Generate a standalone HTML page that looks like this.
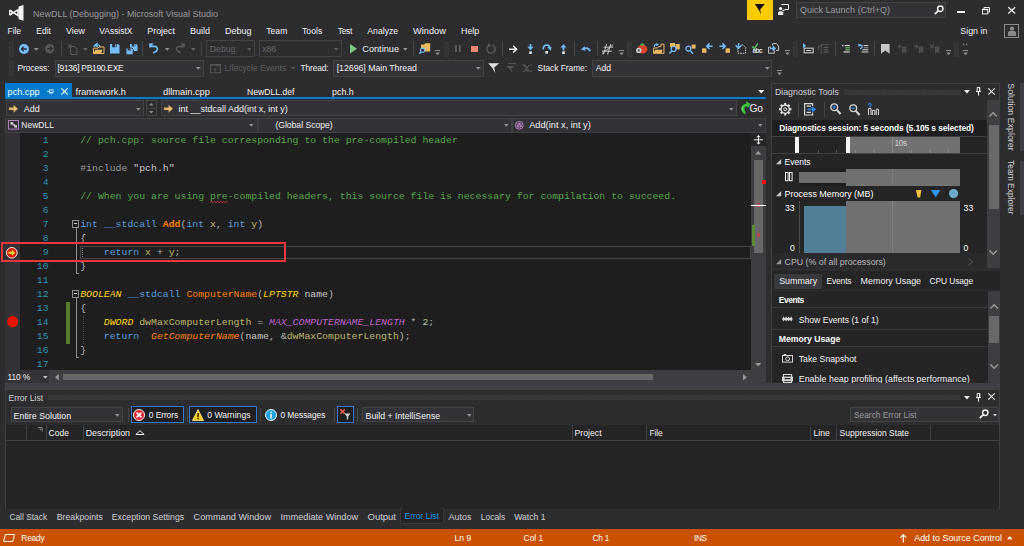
<!DOCTYPE html>
<html><head><meta charset="utf-8"><title>NewDLL (Debugging) - Microsoft Visual Studio</title>
<style>
html,body{margin:0;padding:0;}
body{width:1024px;height:546px;overflow:hidden;background:#2d2d30;position:relative;font-family:"Liberation Sans",sans-serif;}
.a{position:absolute;}
.t{position:absolute;white-space:pre;}
svg{position:absolute;overflow:visible;}
</style></head><body>
<svg style="left:9.3px;top:5px" width="15" height="16" viewBox="0 0 15 16"><path d="M9.6 1.4L14.5 0V15.7L9.6 14.3Z" fill="#f4f4f4"/><path d="M9.8 3.4V11.9L4.3 8.6L1.5 10.7L0 10V5.3L1.5 4.6L4.3 6.7ZM8.2 6.2L5.8 7.65L8.2 9.1ZM1.3 6.6V8.7L2.6 7.65Z" fill="#f4f4f4" fill-rule="evenodd"/></svg>
<span class="t" style="left:33px;top:5.6px;line-height:16px;font-size:8.97px;color:#999999;font-family:'Liberation Sans', sans-serif;letter-spacing:0.000px;">NewDLL (Debugging) - Microsoft Visual Studio</span>
<div class="a" style="left:746.5px;top:0px;width:26px;height:19.5px;background:#ffcc00;"></div>
<svg style="left:754.5px;top:4.4px" width="10" height="10.5" viewBox="0 0 10 10.5"><path d="M0 0H9.6L5.2 5.2L6 10.4L4 6.2L0 0Z" fill="#111"/><path d="M0 0H9.6L4.5 6Z" fill="#111"/></svg>
<svg style="left:778px;top:4px" width="11" height="11" viewBox="0 0 11 11"><path d="M3.2 0.5H10.5V5.5H7L5 7.2V5.5" fill="none" stroke="#e8e8e8" stroke-width="1"/><circle cx="2.6" cy="4.6" r="1.7" fill="#e8e8e8"/><path d="M0 11V8.6L1.2 7.2H4L5.2 8.6V11Z" fill="#e8e8e8"/></svg>
<div class="a" style="left:796px;top:1.5px;width:150px;height:16px;background:#333337;border:1px solid #434346;box-sizing:border-box;"></div>
<span class="t" style="left:800px;top:2.1999999999999993px;line-height:16px;font-size:9.02px;color:#999999;font-family:'Liberation Sans', sans-serif;letter-spacing:0.000px;">Quick Launch (Ctrl+Q)</span>
<svg style="left:933.5px;top:4.5px" width="10" height="10" viewBox="0 0 10 10"><circle cx="6.3" cy="3.7" r="2.7" fill="none" stroke="#f1f1f1" stroke-width="1.5"/><path d="M4.3 5.7L0.8 9.2" stroke="#f1f1f1" stroke-width="1.8"/></svg>
<div class="a" style="left:957px;top:11px;width:7.5px;height:2.2px;background:#f1f1f1;"></div>
<svg style="left:982px;top:7px" width="8" height="7.5" viewBox="0 0 8 7.5"><path d="M2 2V0.5H7.5V5H6" fill="none" stroke="#f1f1f1" stroke-width="1"/><rect x="0.5" y="2.3" width="5.3" height="4.6" fill="none" stroke="#f1f1f1" stroke-width="1"/><rect x="0" y="2" width="6.3" height="1.2" fill="#f1f1f1"/></svg>
<svg style="left:1007.5px;top:7.3px" width="7.5" height="6.8" viewBox="0 0 7.5 6.8"><path d="M0.3 0.3L7.2 6.5M7.2 0.3L0.3 6.5" stroke="#f1f1f1" stroke-width="1.3"/></svg>
<span class="t" style="left:7.6px;top:22.8px;line-height:16px;font-size:8.4px;color:#f1f1f1;font-family:'Liberation Sans', sans-serif;letter-spacing:-0.045px;">File</span>
<span class="t" style="left:36.3px;top:22.8px;line-height:16px;font-size:8.53px;color:#f1f1f1;font-family:'Liberation Sans', sans-serif;letter-spacing:0.000px;">Edit</span>
<span class="t" style="left:66px;top:22.8px;line-height:16px;font-size:8.84px;color:#f1f1f1;font-family:'Liberation Sans', sans-serif;letter-spacing:0.000px;">View</span>
<span class="t" style="left:99.3px;top:22.8px;line-height:16px;font-size:8.45px;color:#f1f1f1;font-family:'Liberation Sans', sans-serif;letter-spacing:0.000px;">VAssistX</span>
<span class="t" style="left:147.3px;top:22.8px;line-height:16px;font-size:8.9px;color:#f1f1f1;font-family:'Liberation Sans', sans-serif;letter-spacing:0.000px;">Project</span>
<span class="t" style="left:190px;top:22.8px;line-height:16px;font-size:8.99px;color:#f1f1f1;font-family:'Liberation Sans', sans-serif;letter-spacing:0.000px;">Build</span>
<span class="t" style="left:225px;top:22.8px;line-height:16px;font-size:8.99px;color:#f1f1f1;font-family:'Liberation Sans', sans-serif;letter-spacing:0.000px;">Debug</span>
<span class="t" style="left:266.3px;top:22.8px;line-height:16px;font-size:8.59px;color:#f1f1f1;font-family:'Liberation Sans', sans-serif;letter-spacing:0.000px;">Team</span>
<span class="t" style="left:302px;top:22.8px;line-height:16px;font-size:8.69px;color:#f1f1f1;font-family:'Liberation Sans', sans-serif;letter-spacing:-0.000px;">Tools</span>
<span class="t" style="left:337.8px;top:22.8px;line-height:16px;font-size:8.4px;color:#f1f1f1;font-family:'Liberation Sans', sans-serif;letter-spacing:-0.303px;">Test</span>
<span class="t" style="left:367.3px;top:22.8px;line-height:16px;font-size:8.68px;color:#f1f1f1;font-family:'Liberation Sans', sans-serif;letter-spacing:0.000px;">Analyze</span>
<span class="t" style="left:413px;top:22.8px;line-height:16px;font-size:9.28px;color:#f1f1f1;font-family:'Liberation Sans', sans-serif;letter-spacing:-0.000px;">Window</span>
<span class="t" style="left:461px;top:22.8px;line-height:16px;font-size:8.9px;color:#f1f1f1;font-family:'Liberation Sans', sans-serif;letter-spacing:0.000px;">Help</span>
<span class="t" style="left:960.3px;top:23.2px;line-height:16px;font-size:8.83px;color:#f1f1f1;font-family:'Liberation Sans', sans-serif;letter-spacing:0.000px;">Sign in</span>
<div class="a" style="left:1003.7px;top:24px;width:15.5px;height:14.3px;border:1px solid #8a8a8a;box-sizing:border-box;"></div>
<svg style="left:1006.5px;top:26.3px" width="10" height="10" viewBox="0 0 10 10"><circle cx="5" cy="2.6" r="2.2" fill="#8a8a8a"/><path d="M1 10V6L2.5 5H7.5L9 6V10Z" fill="#8a8a8a"/></svg>
<svg style="left:9px;top:42px" width="5" height="14" viewBox="0 0 5 14"><rect x="0" y="0" width="1" height="1" fill="#48484d"/><rect x="2.5" y="0" width="1" height="1" fill="#48484d"/><rect x="1.25" y="1.25" width="1" height="1" fill="#48484d"/><rect x="3.75" y="1.25" width="1" height="1" fill="#48484d"/><rect x="0" y="2.5" width="1" height="1" fill="#48484d"/><rect x="2.5" y="2.5" width="1" height="1" fill="#48484d"/><rect x="1.25" y="3.75" width="1" height="1" fill="#48484d"/><rect x="3.75" y="3.75" width="1" height="1" fill="#48484d"/><rect x="0" y="5.0" width="1" height="1" fill="#48484d"/><rect x="2.5" y="5.0" width="1" height="1" fill="#48484d"/><rect x="1.25" y="6.25" width="1" height="1" fill="#48484d"/><rect x="3.75" y="6.25" width="1" height="1" fill="#48484d"/><rect x="0" y="7.5" width="1" height="1" fill="#48484d"/><rect x="2.5" y="7.5" width="1" height="1" fill="#48484d"/><rect x="1.25" y="8.75" width="1" height="1" fill="#48484d"/><rect x="3.75" y="8.75" width="1" height="1" fill="#48484d"/><rect x="0" y="10.0" width="1" height="1" fill="#48484d"/><rect x="2.5" y="10.0" width="1" height="1" fill="#48484d"/><rect x="1.25" y="11.25" width="1" height="1" fill="#48484d"/><rect x="3.75" y="11.25" width="1" height="1" fill="#48484d"/><rect x="0" y="12.5" width="1" height="1" fill="#48484d"/><rect x="2.5" y="12.5" width="1" height="1" fill="#48484d"/><rect x="1.25" y="13.75" width="1" height="1" fill="#48484d"/><rect x="3.75" y="13.75" width="1" height="1" fill="#48484d"/></svg>
<svg style="left:19px;top:43.7px" width="10" height="10" viewBox="0 0 10 10"><circle cx="5" cy="5" r="5" fill="#75beff"/><path d="M7.8 5H2.6M4.8 2.6L2.4 5L4.8 7.4" stroke="#2d2d30" stroke-width="1.3" fill="none"/></svg>
<svg style="left:34.300000000000004px;top:47.800000000000004px" width="4.6" height="2.8" viewBox="0 0 4.6 2.8"><path d="M0 0H4.6L2.3 2.8Z" fill="#929292"/></svg>
<svg style="left:44.8px;top:44.3px" width="9.4" height="9.4" viewBox="0 0 9.4 9.4"><circle cx="4.7" cy="4.7" r="4.7" fill="#58585c"/><path d="M2 4.7H7M5 2.5L7.2 4.7L5 6.9" stroke="#2d2d30" stroke-width="1.2" fill="none"/></svg>
<div class="a" style="left:61.0px;top:41px;width:1px;height:15px;background:#46464a;"></div>
<svg style="left:68px;top:43.5px" width="10" height="11" viewBox="0 0 10 11"><path d="M2.5 2.5H6.5L9 5V10.5H2.5Z" fill="none" stroke="#5a5a5e" stroke-width="1"/><path d="M0.5 0.5L3.5 3.5M3.5 0.5L0.5 3.5M2 0V4M0 2H4" stroke="#5a5a5e" stroke-width="0.8"/></svg>
<svg style="left:83.10000000000001px;top:47.800000000000004px" width="4.6" height="2.8" viewBox="0 0 4.6 2.8"><path d="M0 0H4.6L2.3 2.8Z" fill="#6a6a6e"/></svg>
<svg style="left:93px;top:43.2px" width="11.5" height="11" viewBox="0 0 11.5 11"><path d="M1.2 4.2V2.8L3.6 0.8L3.4 2H5.2Q7 2 7 4" fill="none" stroke="#75beff" stroke-width="1.2"/><path d="M4.5 0L1 2.7L4.7 4.6Z" fill="#75beff"/><path d="M0.5 10.5V5.2H5L6 4H11V10.5Z" fill="none" stroke="#e8b962" stroke-width="1"/><path d="M0.5 10.5L2.3 6.8H9.5L8 10.5Z" fill="#e8b962"/></svg>
<svg style="left:110px;top:44px" width="9.5" height="9.5" viewBox="0 0 9.5 9.5"><path d="M0 0H8L9.5 1.5V9.5H0Z" fill="#75beff"/><rect x="2.2" y="0" width="4.6" height="3.2" fill="#2d2d30"/><rect x="5" y="0.4" width="1.3" height="2.2" fill="#75beff"/></svg>
<svg style="left:125.6px;top:43.5px" width="11.5" height="10.8" viewBox="0 0 11.5 10.8"><path d="M4 0H10.2L11.5 1.3V7H4Z" fill="#75beff"/><rect x="5.8" y="0" width="3.6" height="2.4" fill="#2d2d30"/><rect x="7.9" y="0.3" width="1" height="1.7" fill="#75beff"/><path d="M0 4H6L7.2 5.2V10.8H0Z" fill="#75beff" stroke="#2d2d30" stroke-width="0.9"/><rect x="1.7" y="4.3" width="3.4" height="2.2" fill="#2d2d30"/><rect x="3.7" y="4.5" width="0.9" height="1.6" fill="#75beff"/></svg>
<div class="a" style="left:142.0px;top:41px;width:1px;height:15px;background:#46464a;"></div>
<svg style="left:148.5px;top:43.3px" width="10" height="10.5" viewBox="0 0 10 10.5"><path d="M1.6 3.4H5.6Q8.6 3.6 8.4 6.2Q8 8.4 4.2 10" fill="none" stroke="#75beff" stroke-width="1.6"/><path d="M0 0.6L4.6 0.2L0.6 5.4Z" fill="#75beff"/></svg>
<svg style="left:164.89999999999998px;top:47.800000000000004px" width="4.6" height="2.8" viewBox="0 0 4.6 2.8"><path d="M0 0H4.6L2.3 2.8Z" fill="#929292"/></svg>
<svg style="left:175.4px;top:43.3px" width="10" height="10.5" viewBox="0 0 10 10.5"><path d="M8.4 3.4H4.4Q1.4 3.6 1.6 6.2Q2 8.4 5.8 10" fill="none" stroke="#58585c" stroke-width="1.5"/><path d="M10 0.6L5.4 0.2L9.4 5.4Z" fill="#58585c"/></svg>
<svg style="left:190.7px;top:47.800000000000004px" width="4.6" height="2.8" viewBox="0 0 4.6 2.8"><path d="M0 0H4.6L2.3 2.8Z" fill="#6a6a6e"/></svg>
<div class="a" style="left:201.0px;top:41px;width:1px;height:15px;background:#46464a;"></div>
<div class="a" style="left:206px;top:40.4px;width:49px;height:16.4px;border:1px solid #434346;box-sizing:border-box;"></div>
<span class="t" style="left:209.8px;top:41.0px;line-height:16px;font-size:8.69px;color:#656569;font-family:'Liberation Sans', sans-serif;letter-spacing:0.000px;">Debug</span>
<svg style="left:247.1px;top:47.800000000000004px" width="4.6" height="2.8" viewBox="0 0 4.6 2.8"><path d="M0 0H4.6L2.3 2.8Z" fill="#5a5a5e"/></svg>
<div class="a" style="left:259.3px;top:40.4px;width:82.4px;height:16.4px;border:1px solid #434346;box-sizing:border-box;"></div>
<span class="t" style="left:262.2px;top:41.0px;line-height:16px;font-size:8.68px;color:#656569;font-family:'Liberation Sans', sans-serif;letter-spacing:0.000px;">x86</span>
<svg style="left:334.2px;top:47.800000000000004px" width="4.6" height="2.8" viewBox="0 0 4.6 2.8"><path d="M0 0H4.6L2.3 2.8Z" fill="#5a5a5e"/></svg>
<svg style="left:349.6px;top:44px" width="7" height="9.4" viewBox="0 0 7 9.4"><path d="M0 0L7 4.7L0 9.4Z" fill="#7fc77f"/></svg>
<span class="t" style="left:362.3px;top:40.9px;line-height:16px;font-size:9.19px;color:#f1f1f1;font-family:'Liberation Sans', sans-serif;letter-spacing:0.000px;">Continue</span>
<svg style="left:403.3px;top:47.800000000000004px" width="4.6" height="2.8" viewBox="0 0 4.6 2.8"><path d="M0 0H4.6L2.3 2.8Z" fill="#929292"/></svg>
<div class="a" style="left:413.0px;top:41px;width:1px;height:15px;background:#46464a;"></div>
<svg style="left:418.7px;top:43px" width="11.5" height="11.2" viewBox="0 0 11.5 11.2"><path d="M2 7.5V1.4H5.2L6.2 0.3H11.2V8.4H4" fill="#e8b962"/><circle cx="3.6" cy="7.2" r="2.1" fill="#2d2d30" stroke="#75beff" stroke-width="1.1"/><path d="M2.2 8.8L0.3 10.9" stroke="#75beff" stroke-width="1.4"/></svg>
<svg style="left:435.1px;top:50.300000000000004px" width="5" height="5.6" viewBox="0 0 5 5.6"><rect x="0" y="0" width="5" height="1" fill="#8e8e8e"/><path d="M0.2 2.4H4.8L2.5 5.2Z" fill="#8e8e8e"/></svg>
<svg style="left:443.5px;top:42px" width="5" height="14" viewBox="0 0 5 14"><rect x="0" y="0" width="1" height="1" fill="#48484d"/><rect x="2.5" y="0" width="1" height="1" fill="#48484d"/><rect x="1.25" y="1.25" width="1" height="1" fill="#48484d"/><rect x="3.75" y="1.25" width="1" height="1" fill="#48484d"/><rect x="0" y="2.5" width="1" height="1" fill="#48484d"/><rect x="2.5" y="2.5" width="1" height="1" fill="#48484d"/><rect x="1.25" y="3.75" width="1" height="1" fill="#48484d"/><rect x="3.75" y="3.75" width="1" height="1" fill="#48484d"/><rect x="0" y="5.0" width="1" height="1" fill="#48484d"/><rect x="2.5" y="5.0" width="1" height="1" fill="#48484d"/><rect x="1.25" y="6.25" width="1" height="1" fill="#48484d"/><rect x="3.75" y="6.25" width="1" height="1" fill="#48484d"/><rect x="0" y="7.5" width="1" height="1" fill="#48484d"/><rect x="2.5" y="7.5" width="1" height="1" fill="#48484d"/><rect x="1.25" y="8.75" width="1" height="1" fill="#48484d"/><rect x="3.75" y="8.75" width="1" height="1" fill="#48484d"/><rect x="0" y="10.0" width="1" height="1" fill="#48484d"/><rect x="2.5" y="10.0" width="1" height="1" fill="#48484d"/><rect x="1.25" y="11.25" width="1" height="1" fill="#48484d"/><rect x="3.75" y="11.25" width="1" height="1" fill="#48484d"/><rect x="0" y="12.5" width="1" height="1" fill="#48484d"/><rect x="2.5" y="12.5" width="1" height="1" fill="#48484d"/><rect x="1.25" y="13.75" width="1" height="1" fill="#48484d"/><rect x="3.75" y="13.75" width="1" height="1" fill="#48484d"/></svg>
<div class="a" style="left:455px;top:45px;width:2.3px;height:7.2px;background:#5a5a5e;"></div>
<div class="a" style="left:459px;top:45px;width:2.3px;height:7.2px;background:#5a5a5e;"></div>
<div class="a" style="left:471px;top:45.7px;width:7px;height:6.6px;background:#f48771;"></div>
<svg style="left:486.3px;top:43.3px" width="10" height="11" viewBox="0 0 10 11"><path d="M3.2 2.4A4.1 4.1 0 1 0 6.4 2.2" fill="none" stroke="#5a5a5e" stroke-width="1.3"/><path d="M2 0L5.2 2.6L1.6 4.4Z" fill="#5a5a5e"/></svg>
<div class="a" style="left:502.0px;top:41px;width:1px;height:15px;background:#46464a;"></div>
<svg style="left:508.7px;top:44.7px" width="9" height="8.4" viewBox="0 0 9 8.4"><path d="M0 4.2H7M4.2 0.8L7.6 4.2L4.2 7.6" fill="none" stroke="#f1f1f1" stroke-width="1.5"/></svg>
<svg style="left:526.5px;top:43.8px" width="7" height="10" viewBox="0 0 7 10"><path d="M3.5 0V4" stroke="#75beff" stroke-width="1.8"/><path d="M0.4 2.8H6.6L3.5 6.2Z" fill="#75beff"/><rect x="2.2" y="7.4" width="2.6" height="2.6" fill="#e8e8e8"/></svg>
<svg style="left:541.8px;top:44.3px" width="9.6" height="9.6" viewBox="0 0 9.6 9.6"><path d="M1 5.4Q1.4 1 5 1Q7.6 1.2 7.8 4" fill="none" stroke="#75beff" stroke-width="1.7"/><path d="M5.4 3H9.6L8.6 6.8Z" fill="#75beff"/><rect x="3.4" y="7" width="2.6" height="2.6" fill="#e8e8e8"/></svg>
<svg style="left:559.5px;top:43.8px" width="7" height="10" viewBox="0 0 7 10"><path d="M3.5 2.4V6.4" stroke="#75beff" stroke-width="1.8"/><path d="M0.4 3.6H6.6L3.5 0.2Z" fill="#75beff"/><rect x="2.2" y="7.4" width="2.6" height="2.6" fill="#e8e8e8"/></svg>
<div class="a" style="left:574.1px;top:41px;width:1px;height:15px;background:#46464a;"></div>
<svg style="left:580.5px;top:45.8px" width="9.8" height="5.6" viewBox="0 0 9.8 5.6"><path d="M2.6 2.6Q7.6 1 9 5.2" fill="none" stroke="#75beff" stroke-width="1.7"/><path d="M0 3.4L3.6 0L4.4 4.8Z" fill="#75beff"/></svg>
<div class="a" style="left:597.0px;top:41px;width:1px;height:15px;background:#46464a;"></div>
<svg style="left:602px;top:43.7px" width="11.2" height="10.4" viewBox="0 0 11.2 10.4"><path d="M4.6 0L1.4 10.4M8.8 0L5.6 10.4M1.6 3.2H11.2M0 7.2H9.8" stroke="#c8c8c8" stroke-width="1"/><path d="M0 9.6L11.2 0.6" stroke="#c8c8c8" stroke-width="0.9"/></svg>
<svg style="left:618.7px;top:50.300000000000004px" width="5" height="5.6" viewBox="0 0 5 5.6"><rect x="0" y="0" width="5" height="1" fill="#8e8e8e"/><path d="M0.2 2.4H4.8L2.5 5.2Z" fill="#8e8e8e"/></svg>
<svg style="left:627px;top:42px" width="5" height="14" viewBox="0 0 5 14"><rect x="0" y="0" width="1" height="1" fill="#48484d"/><rect x="2.5" y="0" width="1" height="1" fill="#48484d"/><rect x="1.25" y="1.25" width="1" height="1" fill="#48484d"/><rect x="3.75" y="1.25" width="1" height="1" fill="#48484d"/><rect x="0" y="2.5" width="1" height="1" fill="#48484d"/><rect x="2.5" y="2.5" width="1" height="1" fill="#48484d"/><rect x="1.25" y="3.75" width="1" height="1" fill="#48484d"/><rect x="3.75" y="3.75" width="1" height="1" fill="#48484d"/><rect x="0" y="5.0" width="1" height="1" fill="#48484d"/><rect x="2.5" y="5.0" width="1" height="1" fill="#48484d"/><rect x="1.25" y="6.25" width="1" height="1" fill="#48484d"/><rect x="3.75" y="6.25" width="1" height="1" fill="#48484d"/><rect x="0" y="7.5" width="1" height="1" fill="#48484d"/><rect x="2.5" y="7.5" width="1" height="1" fill="#48484d"/><rect x="1.25" y="8.75" width="1" height="1" fill="#48484d"/><rect x="3.75" y="8.75" width="1" height="1" fill="#48484d"/><rect x="0" y="10.0" width="1" height="1" fill="#48484d"/><rect x="2.5" y="10.0" width="1" height="1" fill="#48484d"/><rect x="1.25" y="11.25" width="1" height="1" fill="#48484d"/><rect x="3.75" y="11.25" width="1" height="1" fill="#48484d"/><rect x="0" y="12.5" width="1" height="1" fill="#48484d"/><rect x="2.5" y="12.5" width="1" height="1" fill="#48484d"/><rect x="1.25" y="13.75" width="1" height="1" fill="#48484d"/><rect x="3.75" y="13.75" width="1" height="1" fill="#48484d"/></svg>
<svg style="left:636px;top:43.4px" width="11.6" height="10.8" viewBox="0 0 11.6 10.8"><ellipse cx="6.4" cy="6.2" rx="5" ry="4.4" fill="#e0442c"/><path d="M4 1.8L6.2 0L8.6 1.6L7 2.8L5 2.8Z" fill="#4fae4f"/><circle cx="2.8" cy="7.4" r="2.7" fill="#d0d0d0"/><circle cx="2.8" cy="7.4" r="1.1" fill="#444"/></svg>
<svg style="left:652.5px;top:43.4px" width="11.5" height="10.8" viewBox="0 0 11.5 10.8"><path d="M1.4 4V2.8Q1.6 1.2 4 1.4" fill="none" stroke="#75beff" stroke-width="1.2"/><path d="M3.4 0L6 1.6L3.4 3.2Z" fill="#75beff"/><path d="M0.6 10.3V5H4.6L5.6 3.6H8V1.2H11V10.3Z" fill="none" stroke="#e8b962" stroke-width="1"/><path d="M0.6 10.3L2 6.8H9.6L8.4 10.3Z" fill="#e8b962"/></svg>
<svg style="left:669px;top:43.4px" width="11" height="10.8" viewBox="0 0 11 10.8"><rect x="1" y="0" width="5" height="4.2" fill="#e8b962"/><rect x="6.4" y="1" width="4.4" height="5.4" fill="#e8b962"/><circle cx="4.6" cy="6" r="2.5" fill="#2d2d30" stroke="#75beff" stroke-width="1.2"/><path d="M3 7.8L0.4 10.5" stroke="#75beff" stroke-width="1.4"/></svg>
<svg style="left:685px;top:44px" width="11" height="10.4" viewBox="0 0 11 10.4"><rect x="6.6" y="0.6" width="4" height="4" fill="#e8b962"/><circle cx="3.4" cy="4.6" r="2.5" fill="none" stroke="#75beff" stroke-width="1.2"/><path d="M5.2 6.6L8 9.8" stroke="#75beff" stroke-width="1.4"/></svg>
<svg style="left:702.4px;top:43.4px" width="11" height="10" viewBox="0 0 11 10"><rect x="0" y="5.4" width="4.4" height="4.4" fill="#e8b962"/><path d="M5 3.2H10.6M7.6 0.4L4.8 3.2L7.6 6" fill="none" stroke="#75beff" stroke-width="1.5"/></svg>
<svg style="left:718.6px;top:43.4px" width="11" height="10" viewBox="0 0 11 10"><rect x="6.6" y="5.4" width="4.4" height="4.4" fill="#e8b962"/><path d="M0.4 3.2H6M3.4 0.4L6.2 3.2L3.4 6" fill="none" stroke="#75beff" stroke-width="1.5"/></svg>
<svg style="left:735px;top:43.4px" width="11.2" height="10.8" viewBox="0 0 11.2 10.8"><path d="M3 5V10.3H10.6V4.4L7.8 1.8H6.6" fill="none" stroke="#c8c8c8" stroke-width="1" stroke-dasharray="1.6 0.9"/><path d="M3.6 0V4.6M0.6 2.2L3.6 5.2L6.6 2.2" fill="none" stroke="#75beff" stroke-width="1.4"/></svg>
<svg style="left:752px;top:43.2px" width="10.8" height="11" viewBox="0 0 10.8 11"><path d="M0.4 3.4L2.4 5.6L5.8 0.4" fill="none" stroke="#5fc25f" stroke-width="1.5"/></svg>
<span class="t" style="left:752.6px;top:47.4px;line-height:8px;font-size:7px;color:#d8d8d8;font-family:'Liberation Sans', sans-serif;font-weight:bold;letter-spacing:-1.031px;">abc</span>
<svg style="left:768px;top:43.4px" width="11.2" height="10.8" viewBox="0 0 11.2 10.8"><path d="M4.6 2.6V0.6H8.2L10.6 2.8V7.4H8" fill="none" stroke="#c8c8c8" stroke-width="1"/><path d="M0.6 4.2H3M6.4 7.6V10.2H0.6V4.2" fill="none" stroke="#c8c8c8" stroke-width="1"/><path d="M2 5.4H6.6M4.8 3.2L7 5.4L4.8 7.6" fill="none" stroke="#75beff" stroke-width="1.5"/></svg>
<svg style="left:784.7px;top:50.300000000000004px" width="5" height="5.6" viewBox="0 0 5 5.6"><rect x="0" y="0" width="5" height="1" fill="#8e8e8e"/><path d="M0.2 2.4H4.8L2.5 5.2Z" fill="#8e8e8e"/></svg>
<svg style="left:793px;top:42px" width="5" height="14" viewBox="0 0 5 14"><rect x="0" y="0" width="1" height="1" fill="#48484d"/><rect x="2.5" y="0" width="1" height="1" fill="#48484d"/><rect x="1.25" y="1.25" width="1" height="1" fill="#48484d"/><rect x="3.75" y="1.25" width="1" height="1" fill="#48484d"/><rect x="0" y="2.5" width="1" height="1" fill="#48484d"/><rect x="2.5" y="2.5" width="1" height="1" fill="#48484d"/><rect x="1.25" y="3.75" width="1" height="1" fill="#48484d"/><rect x="3.75" y="3.75" width="1" height="1" fill="#48484d"/><rect x="0" y="5.0" width="1" height="1" fill="#48484d"/><rect x="2.5" y="5.0" width="1" height="1" fill="#48484d"/><rect x="1.25" y="6.25" width="1" height="1" fill="#48484d"/><rect x="3.75" y="6.25" width="1" height="1" fill="#48484d"/><rect x="0" y="7.5" width="1" height="1" fill="#48484d"/><rect x="2.5" y="7.5" width="1" height="1" fill="#48484d"/><rect x="1.25" y="8.75" width="1" height="1" fill="#48484d"/><rect x="3.75" y="8.75" width="1" height="1" fill="#48484d"/><rect x="0" y="10.0" width="1" height="1" fill="#48484d"/><rect x="2.5" y="10.0" width="1" height="1" fill="#48484d"/><rect x="1.25" y="11.25" width="1" height="1" fill="#48484d"/><rect x="3.75" y="11.25" width="1" height="1" fill="#48484d"/><rect x="0" y="12.5" width="1" height="1" fill="#48484d"/><rect x="2.5" y="12.5" width="1" height="1" fill="#48484d"/><rect x="1.25" y="13.75" width="1" height="1" fill="#48484d"/><rect x="3.75" y="13.75" width="1" height="1" fill="#48484d"/></svg>
<svg style="left:802.5px;top:43.4px" width="10.6" height="10.4" viewBox="0 0 10.6 10.4"><path d="M0 0L3.2 3L0 5Z" fill="#75beff"/><rect x="1.2" y="5.2" width="9" height="4.6" fill="none" stroke="#c8c8c8" stroke-width="1.1"/><rect x="3.2" y="7" width="5" height="1.1" fill="#c8c8c8"/></svg>
<svg style="left:818px;top:43.6px" width="11.4" height="10.4" viewBox="0 0 11.4 10.4"><path d="M0.6 6.4V2H3.2M3.2 10V0.6H10.8" fill="none" stroke="#56565a" stroke-width="1"/><path d="M5.6 3.4H10.4M5.6 5.8H10.4M5.6 8.2H10.4" stroke="#56565a" stroke-width="1.4"/></svg>
<div class="a" style="left:835.1px;top:41px;width:1px;height:15px;background:#46464a;"></div>
<svg style="left:842.4px;top:44.6px" width="8" height="7.6" viewBox="0 0 8 7.6"><rect x="0" y="0.2" width="1.6" height="1" fill="#e8e8e8"/><rect x="2.6" y="0" width="5.2" height="1.1" fill="#e8e8e8"/><rect x="3.4" y="2.2" width="4.4" height="1.1" fill="#6ccb6c"/><rect x="3.4" y="4.3" width="4.4" height="1.1" fill="#6ccb6c"/><rect x="1.6" y="6.4" width="6.2" height="1.1" fill="#e8e8e8"/></svg>
<svg style="left:857.6px;top:44px" width="10.6" height="8.6" viewBox="0 0 10.6 8.6"><path d="M1.4 1.8Q3.4 0.2 4.2 2.2Q4.4 3.8 2.2 5" fill="none" stroke="#75beff" stroke-width="1.3"/><path d="M0 0L2.8 0.4L0.6 3Z" fill="#75beff"/><rect x="5.6" y="1" width="4.8" height="1.1" fill="#c8c8c8"/><rect x="5.6" y="3.2" width="4.8" height="1.1" fill="#8a8a8a"/><rect x="4.4" y="5.2" width="6" height="1.1" fill="#c8c8c8"/><rect x="3.6" y="7.4" width="6.8" height="1.1" fill="#c8c8c8"/></svg>
<div class="a" style="left:874.1px;top:41px;width:1px;height:15px;background:#46464a;"></div>
<svg style="left:880.6px;top:43.5px" width="8.6" height="9.8" viewBox="0 0 8.6 9.8"><path d="M0 0H8.6V9.8L4.3 6.6L0 9.8Z" fill="#c8c8c8"/></svg>
<svg style="left:898px;top:43.8px" width="8.6" height="9.6" viewBox="0 0 8.6 9.6"><path d="M4 2.4V9.6L6.2 7.8L8.4 9.6V2.4Z" fill="#4e4e52"/><path d="M0.2 2.4H4.2M2.2 0.4L0.2 2.4L2.2 4.4" fill="none" stroke="#4e4e52" stroke-width="1.1"/></svg>
<svg style="left:914px;top:43.8px" width="9.4" height="9.6" viewBox="0 0 9.4 9.6"><path d="M4.8 2.4V9.6L7 7.8L9.2 9.6V2.4Z" fill="#4e4e52"/><path d="M0 2.4H4M2 0.4L4 2.4L2 4.4" fill="none" stroke="#4e4e52" stroke-width="1.1"/></svg>
<svg style="left:930px;top:43.8px" width="9.6" height="9.6" viewBox="0 0 9.6 9.6"><path d="M5 2.4V9.6L7.2 7.8L9.4 9.6V2.4Z" fill="#4e4e52"/><path d="M0.2 0.4L4 4.2M4 0.4L0.2 4.2" fill="none" stroke="#4e4e52" stroke-width="1.1"/></svg>
<svg style="left:945.5px;top:50.300000000000004px" width="5" height="5.6" viewBox="0 0 5 5.6"><rect x="0" y="0" width="5" height="1" fill="#8e8e8e"/><path d="M0.2 2.4H4.8L2.5 5.2Z" fill="#8e8e8e"/></svg>
<svg style="left:953.5px;top:42px" width="5" height="14" viewBox="0 0 5 14"><rect x="0" y="0" width="1" height="1" fill="#48484d"/><rect x="2.5" y="0" width="1" height="1" fill="#48484d"/><rect x="1.25" y="1.25" width="1" height="1" fill="#48484d"/><rect x="3.75" y="1.25" width="1" height="1" fill="#48484d"/><rect x="0" y="2.5" width="1" height="1" fill="#48484d"/><rect x="2.5" y="2.5" width="1" height="1" fill="#48484d"/><rect x="1.25" y="3.75" width="1" height="1" fill="#48484d"/><rect x="3.75" y="3.75" width="1" height="1" fill="#48484d"/><rect x="0" y="5.0" width="1" height="1" fill="#48484d"/><rect x="2.5" y="5.0" width="1" height="1" fill="#48484d"/><rect x="1.25" y="6.25" width="1" height="1" fill="#48484d"/><rect x="3.75" y="6.25" width="1" height="1" fill="#48484d"/><rect x="0" y="7.5" width="1" height="1" fill="#48484d"/><rect x="2.5" y="7.5" width="1" height="1" fill="#48484d"/><rect x="1.25" y="8.75" width="1" height="1" fill="#48484d"/><rect x="3.75" y="8.75" width="1" height="1" fill="#48484d"/><rect x="0" y="10.0" width="1" height="1" fill="#48484d"/><rect x="2.5" y="10.0" width="1" height="1" fill="#48484d"/><rect x="1.25" y="11.25" width="1" height="1" fill="#48484d"/><rect x="3.75" y="11.25" width="1" height="1" fill="#48484d"/><rect x="0" y="12.5" width="1" height="1" fill="#48484d"/><rect x="2.5" y="12.5" width="1" height="1" fill="#48484d"/><rect x="1.25" y="13.75" width="1" height="1" fill="#48484d"/><rect x="3.75" y="13.75" width="1" height="1" fill="#48484d"/></svg>
<svg style="left:962.6px;top:42.6px" width="6" height="3" viewBox="0 0 6 3"><path d="M0 0L1.6 1.4L0 2.8ZM3 0L4.6 1.4L3 2.8Z" fill="#8a8a8a"/></svg>
<svg style="left:962.9px;top:50.300000000000004px" width="5" height="5.6" viewBox="0 0 5 5.6"><rect x="0" y="0" width="5" height="1" fill="#8e8e8e"/><path d="M0.2 2.4H4.8L2.5 5.2Z" fill="#8e8e8e"/></svg>
<svg style="left:9px;top:61px" width="5" height="15" viewBox="0 0 5 15"><rect x="0" y="0" width="1" height="1" fill="#48484d"/><rect x="2.5" y="0" width="1" height="1" fill="#48484d"/><rect x="1.25" y="1.25" width="1" height="1" fill="#48484d"/><rect x="3.75" y="1.25" width="1" height="1" fill="#48484d"/><rect x="0" y="2.5" width="1" height="1" fill="#48484d"/><rect x="2.5" y="2.5" width="1" height="1" fill="#48484d"/><rect x="1.25" y="3.75" width="1" height="1" fill="#48484d"/><rect x="3.75" y="3.75" width="1" height="1" fill="#48484d"/><rect x="0" y="5.0" width="1" height="1" fill="#48484d"/><rect x="2.5" y="5.0" width="1" height="1" fill="#48484d"/><rect x="1.25" y="6.25" width="1" height="1" fill="#48484d"/><rect x="3.75" y="6.25" width="1" height="1" fill="#48484d"/><rect x="0" y="7.5" width="1" height="1" fill="#48484d"/><rect x="2.5" y="7.5" width="1" height="1" fill="#48484d"/><rect x="1.25" y="8.75" width="1" height="1" fill="#48484d"/><rect x="3.75" y="8.75" width="1" height="1" fill="#48484d"/><rect x="0" y="10.0" width="1" height="1" fill="#48484d"/><rect x="2.5" y="10.0" width="1" height="1" fill="#48484d"/><rect x="1.25" y="11.25" width="1" height="1" fill="#48484d"/><rect x="3.75" y="11.25" width="1" height="1" fill="#48484d"/><rect x="0" y="12.5" width="1" height="1" fill="#48484d"/><rect x="2.5" y="12.5" width="1" height="1" fill="#48484d"/><rect x="1.25" y="13.75" width="1" height="1" fill="#48484d"/><rect x="3.75" y="13.75" width="1" height="1" fill="#48484d"/></svg>
<span class="t" style="left:17.6px;top:60.3px;line-height:16px;font-size:8.4px;color:#f1f1f1;font-family:'Liberation Sans', sans-serif;letter-spacing:-0.098px;">Process:</span>
<div class="a" style="left:54.5px;top:60.4px;width:149.3px;height:16.4px;background:#333337;border:1px solid #434346;box-sizing:border-box;"></div>
<span class="t" style="left:57.4px;top:60.3px;line-height:16px;font-size:8.4px;color:#f1f1f1;font-family:'Liberation Sans', sans-serif;letter-spacing:-0.244px;">[9136] PB190.EXE</span>
<svg style="left:196.2px;top:67.19999999999999px" width="4.6" height="2.8" viewBox="0 0 4.6 2.8"><path d="M0 0H4.6L2.3 2.8Z" fill="#929292"/></svg>
<svg style="left:210px;top:64px" width="10.8" height="9.2" viewBox="0 0 10.8 9.2"><rect x="0.5" y="0.5" width="9.8" height="8.2" fill="none" stroke="#56565a" stroke-width="1"/><rect x="0" y="0" width="10.8" height="1.8" fill="#56565a"/><path d="M6.4 3.4L4.4 5.4H6.4L4.8 7.4" fill="none" stroke="#56565a" stroke-width="0.9"/></svg>
<span class="t" style="left:224.6px;top:60.3px;line-height:16px;font-size:8.52px;color:#5e5e62;font-family:'Liberation Sans', sans-serif;letter-spacing:0.000px;">Lifecycle Events</span>
<svg style="left:290.7px;top:67.19999999999999px" width="4.6" height="2.8" viewBox="0 0 4.6 2.8"><path d="M0 0H4.6L2.3 2.8Z" fill="#5a5a5e"/></svg>
<span class="t" style="left:300.6px;top:60.3px;line-height:16px;font-size:8.4px;color:#f1f1f1;font-family:'Liberation Sans', sans-serif;letter-spacing:-0.159px;">Thread:</span>
<div class="a" style="left:333px;top:60.4px;width:150.8px;height:16.4px;background:#333337;border:1px solid #434346;box-sizing:border-box;"></div>
<span class="t" style="left:336.7px;top:60.3px;line-height:16px;font-size:8.71px;color:#f1f1f1;font-family:'Liberation Sans', sans-serif;letter-spacing:0.000px;">[12696] Main Thread</span>
<svg style="left:475.7px;top:67.19999999999999px" width="4.6" height="2.8" viewBox="0 0 4.6 2.8"><path d="M0 0H4.6L2.3 2.8Z" fill="#929292"/></svg>
<svg style="left:488px;top:63px" width="11.5" height="10.6" viewBox="0 0 11.5 10.6"><path d="M0.2 0.2H11.2L6.2 4.6L7.4 10.4L4.6 5.2Z" fill="#e0e0e0"/></svg>
<svg style="left:505.6px;top:63px" width="10.4" height="10.4" viewBox="0 0 10.4 10.4"><path d="M2.4 0.6H10.2" stroke="#56565a" stroke-width="1.1"/><path d="M0.2 3H8.6L5.2 5.8L6 10L3.8 6.2Z" fill="#56565a"/></svg>
<svg style="left:522px;top:64px" width="10.4" height="8.4" viewBox="0 0 10.4 8.4"><path d="M0.4 1.2L3.2 1.2Q5 4.4 7 7.2L10 7.2M0.4 7.2H3.2Q5 4 7 1.2L10 1.2" fill="none" stroke="#56565a" stroke-width="1.1"/><path d="M1 0L6 8.4" stroke="#56565a" stroke-width="0.9"/></svg>
<span class="t" style="left:537.6px;top:60.3px;line-height:16px;font-size:8.4px;color:#f1f1f1;font-family:'Liberation Sans', sans-serif;letter-spacing:-0.032px;">Stack Frame:</span>
<div class="a" style="left:592px;top:60.4px;width:180px;height:16.4px;background:#333337;border:1px solid #434346;box-sizing:border-box;"></div>
<span class="t" style="left:595.7px;top:60.3px;line-height:16px;font-size:8.65px;color:#f1f1f1;font-family:'Liberation Sans', sans-serif;letter-spacing:0.000px;">Add</span>
<svg style="left:764.7px;top:67.19999999999999px" width="4.6" height="2.8" viewBox="0 0 4.6 2.8"><path d="M0 0H4.6L2.3 2.8Z" fill="#929292"/></svg>
<svg style="left:777.2px;top:70.1px" width="5" height="5.6" viewBox="0 0 5 5.6"><rect x="0" y="0" width="5" height="1" fill="#8e8e8e"/><path d="M0.2 2.4H4.8L2.5 5.2Z" fill="#8e8e8e"/></svg>
<div class="a" style="left:4.5px;top:83px;width:67.6px;height:14.5px;background:#007acc;"></div>
<div class="a" style="left:4.5px;top:97.2px;width:761.5px;height:1.9px;background:#007acc;"></div>
<span class="t" style="left:7.6px;top:84.0px;line-height:16px;font-size:9.14px;color:#ffffff;font-family:'Liberation Sans', sans-serif;letter-spacing:0.000px;">pch.cpp</span>
<svg style="left:47.4px;top:88.6px" width="6.6" height="5" viewBox="0 0 6.6 5"><path d="M0 2.4H2.4M2.6 0.4V4.6M2.6 0.8H6.2V3.4H2.6M2.6 4H6.2" fill="none" stroke="#d6ebf7" stroke-width="0.9"/></svg>
<svg style="left:61px;top:87.8px" width="7" height="7" viewBox="0 0 7 7"><path d="M0.3 0.3L6.7 6.7M6.7 0.3L0.3 6.7" stroke="#ffffff" stroke-width="1.2"/></svg>
<span class="t" style="left:75.6px;top:84.0px;line-height:16px;font-size:9.16px;color:#f1f1f1;font-family:'Liberation Sans', sans-serif;letter-spacing:0.000px;">framework.h</span>
<span class="t" style="left:163px;top:84.0px;line-height:16px;font-size:9.29px;color:#f1f1f1;font-family:'Liberation Sans', sans-serif;letter-spacing:0.000px;">dllmain.cpp</span>
<span class="t" style="left:247px;top:84.0px;line-height:16px;font-size:8.63px;color:#f1f1f1;font-family:'Liberation Sans', sans-serif;letter-spacing:0.000px;">NewDLL.def</span>
<span class="t" style="left:332px;top:84.0px;line-height:16px;font-size:8.91px;color:#f1f1f1;font-family:'Liberation Sans', sans-serif;letter-spacing:0.000px;">pch.h</span>
<svg style="left:758px;top:89.6px" width="6.4" height="3.6" viewBox="0 0 6.4 3.6"><path d="M0 0H6.4L3.2 3.6Z" fill="#f1f1f1"/></svg>
<div class="a" style="left:4.5px;top:99.1px;width:761.5px;height:18.4px;background:#2d2d30;"></div>
<div class="a" style="left:5.5px;top:100.4px;width:138.3px;height:15.4px;background:#333337;border:1px solid #434346;box-sizing:border-box;"></div>
<svg style="left:8.6px;top:104.7px" width="9" height="7.6" viewBox="0 0 9 7.6"><path d="M0 2.6H4.6V0L9 3.8L4.6 7.6V5H0Z" fill="#e8c17a" stroke="#8a6a2a" stroke-width="0.4"/></svg>
<span class="t" style="left:23.8px;top:100.6px;line-height:16px;font-size:8.99px;color:#f1f1f1;font-family:'Liberation Sans', sans-serif;letter-spacing:0.000px;">Add</span>
<svg style="left:136.0px;top:107.6px" width="4.6" height="2.8" viewBox="0 0 4.6 2.8"><path d="M0 0H4.6L2.3 2.8Z" fill="#929292"/></svg>
<div class="a" style="left:145.7px;top:100.4px;width:11.8px;height:15.4px;background:#2d2d30;border:1px solid #434346;box-sizing:border-box;"></div>
<div class="a" style="left:145.7px;top:107.6px;width:11.8px;height:1px;background:#434346;"></div>
<svg style="left:149px;top:102.6px" width="4.6" height="2.6" viewBox="0 0 4.6 2.6"><path d="M0 2.6L2.3 0L4.6 2.6Z" fill="#8a8a8a"/></svg>
<svg style="left:149px;top:110.8px" width="4.6" height="2.6" viewBox="0 0 4.6 2.6"><path d="M0 0L2.3 2.6L4.6 0Z" fill="#8a8a8a"/></svg>
<div class="a" style="left:161px;top:100.4px;width:576.4px;height:15.4px;background:#333337;border:1px solid #434346;box-sizing:border-box;"></div>
<svg style="left:163.8px;top:104.7px" width="9" height="7.6" viewBox="0 0 9 7.6"><path d="M0 2.6H4.6V0L9 3.8L4.6 7.6V5H0Z" fill="#e8c17a" stroke="#8a6a2a" stroke-width="0.4"/></svg>
<span class="t" style="left:178.6px;top:100.6px;line-height:16px;font-size:8.97px;color:#f1f1f1;font-family:'Liberation Sans', sans-serif;letter-spacing:0.000px;">int __stdcall Add(int x, int y)</span>
<svg style="left:728.9000000000001px;top:107.6px" width="4.6" height="2.8" viewBox="0 0 4.6 2.8"><path d="M0 0H4.6L2.3 2.8Z" fill="#929292"/></svg>
<svg style="left:739.6px;top:101px" width="10.6" height="14" viewBox="0 0 10.6 14"><path d="M4.6 13.6Q-0.6 8 2.4 4.4Q4 2.8 6.4 2.7L6 0.2L10.6 3L7.5 7.2L7 4.9Q4.8 5.2 4.3 7.3Q4 9.4 5.7 11.3Z" fill="#3cc63c"/><path d="M2.6 5.4Q1.4 7.6 2.6 10" fill="none" stroke="#7ee07e" stroke-width="0.9"/></svg>
<span class="t" style="left:749.4px;top:100.6px;line-height:16px;font-size:10.19px;color:#f1f1f1;font-family:'Liberation Sans', sans-serif;letter-spacing:0.000px;">Go</span>
<div class="a" style="left:4.5px;top:117.8px;width:761.5px;height:15.6px;background:#2d2d30;"></div>
<div class="a" style="left:4.5px;top:117.8px;width:253.3px;height:15.4px;background:#333337;border:1px solid #3f3f46;box-sizing:border-box;"></div>
<div class="a" style="left:257.8px;top:117.8px;width:254px;height:15.4px;background:#333337;border:1px solid #3f3f46;box-sizing:border-box;"></div>
<div class="a" style="left:511.8px;top:117.8px;width:254.2px;height:15.4px;background:#333337;border:1px solid #3f3f46;box-sizing:border-box;"></div>
<svg style="left:8.2px;top:120.2px" width="11" height="9.6" viewBox="0 0 11 9.6"><rect x="0.5" y="0.5" width="10" height="8.6" fill="none" stroke="#b57fc0" stroke-width="1"/><path d="M2.4 2.2H5.2V4.2H7V5.2H9V7.4H6.2V5.4H4.4V4.4H2.4Z" fill="#d8d8d8"/></svg>
<span class="t" style="left:21.3px;top:116.9px;line-height:16px;font-size:8.5px;color:#f1f1f1;font-family:'Liberation Sans', sans-serif;letter-spacing:-0.000px;">NewDLL</span>
<svg style="left:249.1px;top:124.0px" width="4.6" height="2.8" viewBox="0 0 4.6 2.8"><path d="M0 0H4.6L2.3 2.8Z" fill="#929292"/></svg>
<span class="t" style="left:275.4px;top:116.9px;line-height:16px;font-size:8.59px;color:#f1f1f1;font-family:'Liberation Sans', sans-serif;letter-spacing:0.000px;">(Global Scope)</span>
<svg style="left:503.9px;top:124.0px" width="4.6" height="2.8" viewBox="0 0 4.6 2.8"><path d="M0 0H4.6L2.3 2.8Z" fill="#929292"/></svg>
<svg style="left:514.6px;top:120.6px" width="8.6" height="8.6" viewBox="0 0 8.6 8.6"><circle cx="4.3" cy="4.3" r="3.9" fill="none" stroke="#b57fc0" stroke-width="1"/><path d="M4.3 1.6L6.8 3V5.8L4.3 7.2L1.8 5.8V3Z" fill="#b57fc0"/><path d="M4.3 4.4V7M4.3 4.4L2 3.1M4.3 4.4L6.6 3.1" stroke="#2d2d30" stroke-width="0.6"/></svg>
<span class="t" style="left:529.2px;top:116.9px;line-height:16px;font-size:9.24px;color:#f1f1f1;font-family:'Liberation Sans', sans-serif;letter-spacing:0.000px;">Add(int x, int y)</span>
<svg style="left:758.3000000000001px;top:124.0px" width="4.6" height="2.8" viewBox="0 0 4.6 2.8"><path d="M0 0H4.6L2.3 2.8Z" fill="#929292"/></svg>
<div class="a" style="left:4.5px;top:133.4px;width:15px;height:236.6px;background:#333337;"></div>
<div class="a" style="left:19.5px;top:133.4px;width:731.5px;height:236.6px;background:#1e1e1e;"></div>
<span class="t" style="left:42.7px;top:134.1px;line-height:14px;font-size:9.8px;color:#2b91af;font-family:'Liberation Mono', monospace;letter-spacing:0.009px;">1</span>
<span class="t" style="left:42.7px;top:148.1px;line-height:14px;font-size:9.8px;color:#2b91af;font-family:'Liberation Mono', monospace;letter-spacing:0.009px;">2</span>
<span class="t" style="left:42.7px;top:162.1px;line-height:14px;font-size:9.8px;color:#2b91af;font-family:'Liberation Mono', monospace;letter-spacing:0.009px;">3</span>
<span class="t" style="left:42.7px;top:176.1px;line-height:14px;font-size:9.8px;color:#2b91af;font-family:'Liberation Mono', monospace;letter-spacing:0.009px;">4</span>
<span class="t" style="left:42.7px;top:190.1px;line-height:14px;font-size:9.8px;color:#2b91af;font-family:'Liberation Mono', monospace;letter-spacing:0.009px;">5</span>
<span class="t" style="left:42.7px;top:204.1px;line-height:14px;font-size:9.8px;color:#2b91af;font-family:'Liberation Mono', monospace;letter-spacing:0.009px;">6</span>
<span class="t" style="left:42.7px;top:218.1px;line-height:14px;font-size:9.8px;color:#2b91af;font-family:'Liberation Mono', monospace;letter-spacing:0.009px;">7</span>
<span class="t" style="left:42.7px;top:232.1px;line-height:14px;font-size:9.8px;color:#2b91af;font-family:'Liberation Mono', monospace;letter-spacing:0.009px;">8</span>
<span class="t" style="left:42.7px;top:246.1px;line-height:14px;font-size:9.8px;color:#2b91af;font-family:'Liberation Mono', monospace;letter-spacing:0.009px;">9</span>
<span class="t" style="left:36.8px;top:260.1px;line-height:14px;font-size:9.8px;color:#2b91af;font-family:'Liberation Mono', monospace;letter-spacing:0.034px;">10</span>
<span class="t" style="left:36.8px;top:274.1px;line-height:14px;font-size:9.8px;color:#2b91af;font-family:'Liberation Mono', monospace;letter-spacing:0.034px;">11</span>
<span class="t" style="left:36.8px;top:288.1px;line-height:14px;font-size:9.8px;color:#2b91af;font-family:'Liberation Mono', monospace;letter-spacing:0.034px;">12</span>
<span class="t" style="left:36.8px;top:302.1px;line-height:14px;font-size:9.8px;color:#2b91af;font-family:'Liberation Mono', monospace;letter-spacing:0.034px;">13</span>
<span class="t" style="left:36.8px;top:316.1px;line-height:14px;font-size:9.8px;color:#2b91af;font-family:'Liberation Mono', monospace;letter-spacing:0.034px;">14</span>
<span class="t" style="left:36.8px;top:330.1px;line-height:14px;font-size:9.8px;color:#2b91af;font-family:'Liberation Mono', monospace;letter-spacing:0.034px;">15</span>
<span class="t" style="left:36.8px;top:344.1px;line-height:14px;font-size:9.8px;color:#2b91af;font-family:'Liberation Mono', monospace;letter-spacing:0.034px;">16</span>
<span class="t" style="left:36.8px;top:358.1px;line-height:14px;font-size:9.8px;color:#2b91af;font-family:'Liberation Mono', monospace;letter-spacing:0.034px;">17</span>
<span class="t" style="left:80.2px;top:134.1px;line-height:14px;font-size:9.83px;color:#57a64a;font-family:'Liberation Mono', monospace;letter-spacing:0.002px;">// pch.cpp: source file corresponding to the pre-compiled header</span>
<span class="t" style="left:80.2px;top:162.1px;line-height:14px;font-size:9.83px;color:#9b9b9b;font-family:'Liberation Mono', monospace;letter-spacing:0.002px;">#include</span>
<span class="t" style="left:133.3px;top:162.1px;line-height:14px;font-size:9.83px;color:#c8c8c8;font-family:'Liberation Mono', monospace;letter-spacing:0.001px;">&quot;pch.h&quot;</span>
<span class="t" style="left:80.2px;top:190.1px;line-height:14px;font-size:9.83px;color:#57a64a;font-family:'Liberation Mono', monospace;letter-spacing:0.002px;">// When you are using pre-compiled headers, this source file is necessary for compilation to succeed.</span>
<svg style="left:210.0px;top:201.29999999999998px" width="17.700000000000003" height="2.2" viewBox="0 0 17.700000000000003 2.2"><path d="M0 1.6L1.5 0.4L3 1.6L4.5 0.4L6 1.6L7.5 0.4L9 1.6L10.5 0.4L12 1.6L13.5 0.4L15 1.6L16.5 0.4L17.6 1.4" fill="none" stroke="#e04040" stroke-width="0.8"/></svg>
<span class="t" style="left:80.2px;top:218.1px;line-height:14px;font-size:9.83px;color:#569cd6;font-family:'Liberation Mono', monospace;letter-spacing:-0.002px;">int</span>
<span class="t" style="left:103.80000000000001px;top:218.1px;line-height:14px;font-size:9.83px;color:#569cd6;font-family:'Liberation Mono', monospace;letter-spacing:0.001px;">__stdcall</span>
<span class="t" style="left:162.8px;top:218.1px;line-height:14px;font-size:9.83px;color:#ff8000;font-family:'Liberation Mono', monospace;font-weight:bold;letter-spacing:-0.002px;">Add</span>
<span class="t" style="left:180.5px;top:218.1px;line-height:14px;font-size:9.83px;color:#b4b4b4;font-family:'Liberation Mono', monospace;letter-spacing:-0.006px;">(</span>
<span class="t" style="left:186.4px;top:218.1px;line-height:14px;font-size:9.83px;color:#569cd6;font-family:'Liberation Mono', monospace;letter-spacing:-0.002px;">int</span>
<span class="t" style="left:210.0px;top:218.1px;line-height:14px;font-size:9.83px;color:#bdb76b;font-family:'Liberation Mono', monospace;letter-spacing:-0.006px;">x</span>
<span class="t" style="left:215.90000000000003px;top:218.1px;line-height:14px;font-size:9.83px;color:#b4b4b4;font-family:'Liberation Mono', monospace;letter-spacing:-0.006px;">,</span>
<span class="t" style="left:227.7px;top:218.1px;line-height:14px;font-size:9.83px;color:#569cd6;font-family:'Liberation Mono', monospace;letter-spacing:-0.002px;">int</span>
<span class="t" style="left:251.3px;top:218.1px;line-height:14px;font-size:9.83px;color:#bdb76b;font-family:'Liberation Mono', monospace;letter-spacing:-0.006px;">y</span>
<span class="t" style="left:257.2px;top:218.1px;line-height:14px;font-size:9.83px;color:#b4b4b4;font-family:'Liberation Mono', monospace;letter-spacing:-0.006px;">)</span>
<span class="t" style="left:80.2px;top:232.1px;line-height:14px;font-size:9.83px;color:#b4b4b4;font-family:'Liberation Mono', monospace;letter-spacing:-0.006px;">{</span>
<span class="t" style="left:103.80000000000001px;top:246.1px;line-height:14px;font-size:9.83px;color:#569cd6;font-family:'Liberation Mono', monospace;letter-spacing:0.002px;">return</span>
<span class="t" style="left:145.10000000000002px;top:246.1px;line-height:14px;font-size:9.83px;color:#bdb76b;font-family:'Liberation Mono', monospace;letter-spacing:-0.006px;">x</span>
<span class="t" style="left:156.9px;top:246.1px;line-height:14px;font-size:9.83px;color:#b4b4b4;font-family:'Liberation Mono', monospace;letter-spacing:-0.006px;">+</span>
<span class="t" style="left:168.7px;top:246.1px;line-height:14px;font-size:9.83px;color:#bdb76b;font-family:'Liberation Mono', monospace;letter-spacing:-0.006px;">y</span>
<span class="t" style="left:174.60000000000002px;top:246.1px;line-height:14px;font-size:9.83px;color:#b4b4b4;font-family:'Liberation Mono', monospace;letter-spacing:-0.006px;">;</span>
<span class="t" style="left:80.2px;top:260.1px;line-height:14px;font-size:9.83px;color:#b4b4b4;font-family:'Liberation Mono', monospace;letter-spacing:-0.006px;">}</span>
<span class="t" style="left:80.2px;top:288.1px;line-height:14px;font-size:9.83px;color:#ffd700;font-family:'Liberation Mono', monospace;font-style:italic;letter-spacing:0.001px;">BOOLEAN</span>
<span class="t" style="left:127.4px;top:288.1px;line-height:14px;font-size:9.83px;color:#569cd6;font-family:'Liberation Mono', monospace;letter-spacing:0.001px;">__stdcall</span>
<span class="t" style="left:186.4px;top:288.1px;line-height:14px;font-size:9.83px;color:#ff8000;font-family:'Liberation Mono', monospace;letter-spacing:0.002px;">ComputerName</span>
<span class="t" style="left:257.2px;top:288.1px;line-height:14px;font-size:9.83px;color:#b4b4b4;font-family:'Liberation Mono', monospace;letter-spacing:-0.006px;">(</span>
<span class="t" style="left:263.1px;top:288.1px;line-height:14px;font-size:9.83px;color:#ffd700;font-family:'Liberation Mono', monospace;font-style:italic;letter-spacing:0.002px;">LPTSTR</span>
<span class="t" style="left:304.40000000000003px;top:288.1px;line-height:14px;font-size:9.83px;color:#c8c8c8;font-family:'Liberation Mono', monospace;letter-spacing:0.002px;">name</span>
<span class="t" style="left:328.0px;top:288.1px;line-height:14px;font-size:9.83px;color:#b4b4b4;font-family:'Liberation Mono', monospace;letter-spacing:-0.006px;">)</span>
<span class="t" style="left:80.2px;top:302.1px;line-height:14px;font-size:9.83px;color:#b4b4b4;font-family:'Liberation Mono', monospace;letter-spacing:-0.006px;">{</span>
<span class="t" style="left:103.80000000000001px;top:316.1px;line-height:14px;font-size:9.83px;color:#ffd700;font-family:'Liberation Mono', monospace;font-style:italic;letter-spacing:0.000px;">DWORD</span>
<span class="t" style="left:139.2px;top:316.1px;line-height:14px;font-size:9.83px;color:#bdb76b;font-family:'Liberation Mono', monospace;letter-spacing:0.002px;">dwMaxComputerLength</span>
<span class="t" style="left:257.2px;top:316.1px;line-height:14px;font-size:9.83px;color:#b4b4b4;font-family:'Liberation Mono', monospace;letter-spacing:-0.006px;">=</span>
<span class="t" style="left:269.0px;top:316.1px;line-height:14px;font-size:9.83px;color:#bd63c5;font-family:'Liberation Mono', monospace;font-style:italic;letter-spacing:0.002px;">MAX_COMPUTERNAME_LENGTH</span>
<span class="t" style="left:410.6px;top:316.1px;line-height:14px;font-size:9.83px;color:#b4b4b4;font-family:'Liberation Mono', monospace;letter-spacing:-0.006px;">*</span>
<span class="t" style="left:422.40000000000003px;top:316.1px;line-height:14px;font-size:9.83px;color:#b5cea8;font-family:'Liberation Mono', monospace;letter-spacing:-0.006px;">2</span>
<span class="t" style="left:428.3px;top:316.1px;line-height:14px;font-size:9.83px;color:#b4b4b4;font-family:'Liberation Mono', monospace;letter-spacing:-0.006px;">;</span>
<span class="t" style="left:103.80000000000001px;top:330.1px;line-height:14px;font-size:9.83px;color:#569cd6;font-family:'Liberation Mono', monospace;letter-spacing:0.002px;">return</span>
<span class="t" style="left:151.0px;top:330.1px;line-height:14px;font-size:9.83px;color:#ff8000;font-family:'Liberation Mono', monospace;font-style:italic;letter-spacing:0.002px;">GetComputerName</span>
<span class="t" style="left:239.5px;top:330.1px;line-height:14px;font-size:9.83px;color:#b4b4b4;font-family:'Liberation Mono', monospace;letter-spacing:-0.006px;">(</span>
<span class="t" style="left:245.40000000000003px;top:330.1px;line-height:14px;font-size:9.83px;color:#c8c8c8;font-family:'Liberation Mono', monospace;letter-spacing:0.002px;">name</span>
<span class="t" style="left:269.0px;top:330.1px;line-height:14px;font-size:9.83px;color:#b4b4b4;font-family:'Liberation Mono', monospace;letter-spacing:-0.006px;">,</span>
<span class="t" style="left:280.8px;top:330.1px;line-height:14px;font-size:9.83px;color:#b4b4b4;font-family:'Liberation Mono', monospace;letter-spacing:-0.006px;">&amp;</span>
<span class="t" style="left:286.7px;top:330.1px;line-height:14px;font-size:9.83px;color:#bdb76b;font-family:'Liberation Mono', monospace;letter-spacing:0.002px;">dwMaxComputerLength</span>
<span class="t" style="left:398.8px;top:330.1px;line-height:14px;font-size:9.83px;color:#b4b4b4;font-family:'Liberation Mono', monospace;letter-spacing:-0.006px;">)</span>
<span class="t" style="left:404.7px;top:330.1px;line-height:14px;font-size:9.83px;color:#b4b4b4;font-family:'Liberation Mono', monospace;letter-spacing:-0.006px;">;</span>
<span class="t" style="left:80.2px;top:344.1px;line-height:14px;font-size:9.83px;color:#b4b4b4;font-family:'Liberation Mono', monospace;letter-spacing:-0.006px;">}</span>
<div class="a" style="left:72.2px;top:220.2px;width:7px;height:7.4px;background:#1e1e1e;border:1px solid #8c8c8c;box-sizing:border-box;"></div>
<div class="a" style="left:74px;top:223.4px;width:3.4px;height:1px;background:#d0d0d0;"></div>
<div class="a" style="left:75.6px;top:227.6px;width:1px;height:45.900000000000006px;background:#8c8c8c;"></div>
<div class="a" style="left:75.6px;top:272.5px;width:3.6px;height:1px;background:#8c8c8c;"></div>
<div class="a" style="left:72.2px;top:290.20000000000005px;width:7px;height:7.4px;background:#1e1e1e;border:1px solid #8c8c8c;box-sizing:border-box;"></div>
<div class="a" style="left:74px;top:293.40000000000003px;width:3.4px;height:1px;background:#d0d0d0;"></div>
<div class="a" style="left:75.6px;top:297.6px;width:1px;height:59.89999999999998px;background:#8c8c8c;"></div>
<div class="a" style="left:75.6px;top:356.5px;width:3.6px;height:1px;background:#8c8c8c;"></div>
<div class="a" style="left:65.5px;top:301.5px;width:4.3px;height:42px;background:#577c2e;"></div>
<div class="a" style="left:82.6px;top:316px;width:0;height:28px;border-left:1px dotted #4a4a4a"></div>
<div class="a" style="left:80px;top:246px;width:670.5px;height:12.6px;border:1.5px solid #464646;box-sizing:border-box;"></div>
<div class="a" style="left:82px;top:247.5px;width:0;height:9.6px;border-left:1px dotted #8a8a8a"></div>
<svg style="left:6.4px;top:246.5px" width="11.6" height="11.6" viewBox="0 0 11.6 11.6"><circle cx="5.8" cy="5.8" r="5.3" fill="#e51400" stroke="#f0f0f0" stroke-width="1"/><path d="M2.4 4.6H5.8V2.6L9.4 5.8L5.8 9V7H2.4Z" fill="#ffd83a" stroke="#7a5a00" stroke-width="0.4"/></svg>
<svg style="left:6.6px;top:316.4px" width="11.4" height="11.4" viewBox="0 0 11.4 11.4"><circle cx="5.7" cy="5.7" r="5.6" fill="#e51400"/></svg>
<div class="a" style="left:1px;top:241.6px;width:285px;height:20px;border:2.3px solid #e8373e;box-sizing:border-box;"></div>
<div class="a" style="left:751px;top:133.4px;width:15px;height:236.6px;background:#3e3e42;"></div>
<div class="a" style="left:751px;top:133.4px;width:15px;height:13px;background:#252526;"></div>
<svg style="left:754px;top:135.2px" width="9" height="9.6" viewBox="0 0 9 9.6"><path d="M4.5 0L6.6 2.2H2.4ZM4.5 9.6L6.6 7.4H2.4Z" fill="#f1f1f1"/><rect x="4" y="1.6" width="1" height="6.4" fill="#f1f1f1"/><rect x="0" y="4.3" width="9" height="1" fill="#f1f1f1"/></svg>
<svg style="left:755.4px;top:151px" width="6.4" height="3.6" viewBox="0 0 6.4 3.6"><path d="M0 3.6H6.4L3.2 0Z" fill="#999"/></svg>
<div class="a" style="left:754.4px;top:159.6px;width:8.2px;height:93px;background:#686868;"></div>
<div class="a" style="left:761.6px;top:180px;width:4.2px;height:4.4px;background:#ff1010;"></div>
<div class="a" style="left:757px;top:203.2px;width:3px;height:3.6px;background:#b04848;"></div>
<div class="a" style="left:757px;top:233px;width:3px;height:4px;background:#b04848;"></div>
<div class="a" style="left:751.6px;top:225px;width:3.6px;height:21px;background:#5c8a36;"></div>
<div class="a" style="left:751px;top:204.6px;width:15px;height:1.4px;background:#ffffff;"></div>
<svg style="left:755.4px;top:362.6px" width="6.4" height="3.6" viewBox="0 0 6.4 3.6"><path d="M0 0H6.4L3.2 3.6Z" fill="#999"/></svg>
<div class="a" style="left:4.5px;top:370px;width:761.5px;height:12.6px;background:#3e3e42;"></div>
<div class="a" style="left:4.5px;top:370px;width:44.6px;height:12.6px;background:#333337;"></div>
<span class="t" style="left:7.6px;top:369.2px;line-height:16px;font-size:8.4px;color:#f1f1f1;font-family:'Liberation Sans', sans-serif;letter-spacing:-0.100px;">110 %</span>
<svg style="left:43.300000000000004px;top:376.20000000000005px" width="4.6" height="2.8" viewBox="0 0 4.6 2.8"><path d="M0 0H4.6L2.3 2.8Z" fill="#c8c8c8"/></svg>
<svg style="left:55px;top:374.2px" width="3.8" height="6.4" viewBox="0 0 3.8 6.4"><path d="M3.8 0V6.4L0 3.2Z" fill="#999"/></svg>
<div class="a" style="left:63px;top:373.8px;width:590px;height:6.4px;background:#686868;"></div>
<svg style="left:743px;top:374.2px" width="3.8" height="6.4" viewBox="0 0 3.8 6.4"><path d="M0 0V6.4L3.8 3.2Z" fill="#999"/></svg>
<div class="a" style="left:5px;top:383px;width:995px;height:6px;background:#3f3f46;"></div>
<div class="a" style="left:771px;top:83px;width:229px;height:300px;background:#2d2d30;border:1px solid #3f3f46;box-sizing:border-box;"></div>
<span class="t" style="left:774.9px;top:84.2px;line-height:16px;font-size:8.81px;color:#d0d0d0;font-family:'Liberation Sans', sans-serif;letter-spacing:-0.000px;">Diagnostic Tools</span>
<div class="a" style="left:844px;top:89.6px;width:117px;height:5px;background-image:radial-gradient(circle at 0.6px 0.6px,#47474c 0.55px,transparent 0.75px),radial-gradient(circle at 1.85px 1.85px,#47474c 0.55px,transparent 0.75px);background-size:2.5px 2.5px;"></div>
<svg style="left:964.4px;top:90.4px" width="6" height="3.4" viewBox="0 0 6 3.4"><path d="M0 0H6L3 3.4Z" fill="#f1f1f1"/></svg>
<svg style="left:976.4px;top:87.2px" width="5" height="8.6" viewBox="0 0 5 8.6"><path d="M1.2 0.5H3.8V4.6H1.2ZM0 4.6H5M2.5 4.6V8.6" fill="none" stroke="#f1f1f1" stroke-width="1"/><rect x="3" y="0.5" width="1" height="4" fill="#f1f1f1"/></svg>
<svg style="left:988px;top:88px" width="7" height="7" viewBox="0 0 7 7"><path d="M0.3 0.3L6.7 6.7M6.7 0.3L0.3 6.7" stroke="#f1f1f1" stroke-width="1.2"/></svg>
<svg style="left:778.8px;top:103.4px" width="12.4" height="12.4" viewBox="0 0 12.4 12.4"><g transform="translate(6.2 6.2)"><circle r="4.1" fill="none" stroke="#e0e0e0" stroke-width="1.3"/><circle r="1.5" fill="none" stroke="#e0e0e0" stroke-width="1"/><rect x="-1.1" y="-6.2" width="2.2" height="2.2" fill="#e0e0e0" transform="rotate(0)"/><rect x="-1.1" y="-6.2" width="2.2" height="2.2" fill="#e0e0e0" transform="rotate(45)"/><rect x="-1.1" y="-6.2" width="2.2" height="2.2" fill="#e0e0e0" transform="rotate(90)"/><rect x="-1.1" y="-6.2" width="2.2" height="2.2" fill="#e0e0e0" transform="rotate(135)"/><rect x="-1.1" y="-6.2" width="2.2" height="2.2" fill="#e0e0e0" transform="rotate(180)"/><rect x="-1.1" y="-6.2" width="2.2" height="2.2" fill="#e0e0e0" transform="rotate(225)"/><rect x="-1.1" y="-6.2" width="2.2" height="2.2" fill="#e0e0e0" transform="rotate(270)"/><rect x="-1.1" y="-6.2" width="2.2" height="2.2" fill="#e0e0e0" transform="rotate(315)"/></g></svg>
<div class="a" style="left:797.9px;top:102px;width:1px;height:15px;background:#46464a;"></div>
<svg style="left:804px;top:103px" width="12.2" height="12.6" viewBox="0 0 12.2 12.6"><path d="M8.6 3V0.6H0.6V12H8.6V9.6" fill="none" stroke="#d8d8d8" stroke-width="1.2"/><path d="M2.6 3.2H7M2.6 9.4H7" stroke="#d8d8d8" stroke-width="1.2"/><path d="M3.4 6.3H10M8 3.8L10.8 6.3L8 8.8" fill="none" stroke="#2e7fd8" stroke-width="1.8"/></svg>
<div class="a" style="left:823.5px;top:102px;width:1px;height:15px;background:#46464a;"></div>
<svg style="left:830px;top:103.2px" width="11.4" height="11.6" viewBox="0 0 11.4 11.6"><circle cx="4.2" cy="4.2" r="3.4" fill="none" stroke="#d8d8d8" stroke-width="1.3"/><path d="M6.8 6.8L10.6 11" stroke="#d8d8d8" stroke-width="2"/><path d="M2.4 4.2H6" stroke="#2e7fd8" stroke-width="1.3"/><path d="M4.2 2.4V6" stroke="#2e7fd8" stroke-width="1.3"/></svg>
<svg style="left:849.4px;top:104.4px" width="11.4" height="11.6" viewBox="0 0 11.4 11.6"><circle cx="4.2" cy="4.2" r="3.4" fill="none" stroke="#d8d8d8" stroke-width="1.3"/><path d="M6.8 6.8L10.6 11" stroke="#d8d8d8" stroke-width="2"/><path d="M2.4 4.2H6" stroke="#2e7fd8" stroke-width="1.3"/></svg>
<svg style="left:867px;top:103.2px" width="12" height="12" viewBox="0 0 12 12"><path d="M1.6 12V5.4H4V12M5.4 12V7.4H7.8V12M9.2 12V6.2H11.4V12" fill="none" stroke="#d8d8d8" stroke-width="1"/><path d="M1 2Q1.4 0.4 3 0.6Q4.6 1 3.8 2.6L3 3.6V4.4" fill="none" stroke="#2e7fd8" stroke-width="1.2"/></svg>
<div class="a" style="left:772px;top:119.6px;width:215.4px;height:16px;background:#1e1e1e;"></div>
<span class="t" style="left:779.2px;top:120.0px;line-height:16px;font-size:8.4px;color:#ffffff;font-family:'Liberation Sans', sans-serif;font-weight:bold;letter-spacing:-0.087px;">Diagnostics session: 5 seconds (5.105 s selected)</span>
<div class="a" style="left:772px;top:135.6px;width:215.4px;height:1px;background:#3f3f46;"></div>
<div class="a" style="left:772px;top:136.6px;width:215.4px;height:16.4px;background:#252526;"></div>
<div class="a" style="left:850px;top:136.6px;width:110px;height:16.4px;background:#717171;"></div>
<div class="a" style="left:795px;top:136.6px;width:4px;height:16.4px;background:#f5f5f5;"></div>
<div class="a" style="left:846px;top:136.6px;width:4px;height:16.4px;background:#f5f5f5;"></div>
<div class="a" style="left:817.7px;top:149.6px;width:1px;height:3.4px;background:#555;"></div>
<div class="a" style="left:836.4px;top:149.6px;width:1px;height:3.4px;background:#555;"></div>
<div class="a" style="left:855px;top:149.6px;width:1px;height:3.4px;background:#8a8a8a;"></div>
<div class="a" style="left:873.7px;top:149.6px;width:1px;height:3.4px;background:#8a8a8a;"></div>
<div class="a" style="left:911px;top:149.6px;width:1px;height:3.4px;background:#8a8a8a;"></div>
<div class="a" style="left:929.8px;top:149.6px;width:1px;height:3.4px;background:#8a8a8a;"></div>
<div class="a" style="left:948.4px;top:149.6px;width:1px;height:3.4px;background:#8a8a8a;"></div>
<div class="a" style="left:892.2px;top:136.6px;width:1px;height:16.4px;background:#8c8c8c;"></div>
<span class="t" style="left:894.6px;top:135.2px;line-height:16px;font-size:8.4px;color:#d0d0d0;font-family:'Liberation Sans', sans-serif;letter-spacing:-0.473px;">10s</span>
<div class="a" style="left:772px;top:153px;width:215.4px;height:1px;background:#3f3f46;"></div>
<div class="a" style="left:772px;top:154px;width:215.4px;height:114px;background:#252526;"></div>
<svg style="left:776px;top:158.8px" width="5.2" height="5.2" viewBox="0 0 5.2 5.2"><path d="M5.2 0V5.2H0Z" fill="#c8c8c8"/></svg>
<span class="t" style="left:784.6px;top:154.0px;line-height:16px;font-size:8.5px;color:#ffffff;font-family:'Liberation Sans', sans-serif;letter-spacing:0.000px;">Events</span>
<div class="a" style="left:798.6px;top:169.4px;width:161.4px;height:16.6px;background:#717171;"></div>
<div class="a" style="left:798.6px;top:169.4px;width:47.6px;height:16.2px;background:#1e1e1e;"></div>
<div class="a" style="left:798.6px;top:172.4px;width:47px;height:10.4px;background:#6c6c6c;"></div>
<div class="a" style="left:892.2px;top:169.4px;width:1px;height:16.2px;background:#7c7c7c;"></div>
<svg style="left:785px;top:172px" width="7.8" height="9.2" viewBox="0 0 7.8 9.2"><rect x="0.5" y="0.5" width="2.6" height="8.2" fill="none" stroke="#f1f1f1" stroke-width="1"/><rect x="4.5" y="0.5" width="2.6" height="8.2" fill="none" stroke="#f1f1f1" stroke-width="1"/></svg>
<svg style="left:776px;top:191.2px" width="5.2" height="5.2" viewBox="0 0 5.2 5.2"><path d="M5.2 0V5.2H0Z" fill="#c8c8c8"/></svg>
<span class="t" style="left:784.6px;top:186.4px;line-height:16px;font-size:8.95px;color:#ffffff;font-family:'Liberation Sans', sans-serif;letter-spacing:0.000px;">Process Memory (MB)</span>
<svg style="left:915.6px;top:189.8px" width="5.4" height="7.6" viewBox="0 0 5.4 7.6"><path d="M0 0H5.4L4.2 7.6H1.6Z" fill="#f0c040"/></svg>
<svg style="left:931.4px;top:189.6px" width="9.4" height="7.2" viewBox="0 0 9.4 7.2"><path d="M0 0H9.4L4.7 7.2Z" fill="#2e96f0"/></svg>
<svg style="left:949.4px;top:189.2px" width="9.2" height="9.2" viewBox="0 0 9.2 9.2"><circle cx="4.6" cy="4.6" r="4.6" fill="#6caccc"/></svg>
<div class="a" style="left:798.6px;top:201px;width:161.4px;height:51.8px;background:#717171;"></div>
<div class="a" style="left:798.6px;top:201px;width:47.6px;height:51.8px;background:#252526;"></div>
<div class="a" style="left:804px;top:206px;width:42.2px;height:46.8px;background:#527f98;"></div>
<div class="a" style="left:798.6px;top:201px;width:1px;height:51.8px;background:#4a4a4a;"></div>
<div class="a" style="left:892.2px;top:201px;width:1px;height:51.8px;background:#7f7f7f;"></div>
<span class="t" style="left:785px;top:199.6px;line-height:16px;font-size:8.62px;color:#ffffff;font-family:'Liberation Sans', sans-serif;letter-spacing:-0.000px;">33</span>
<span class="t" style="left:790px;top:239.8px;line-height:16px;font-size:8.62px;color:#ffffff;font-family:'Liberation Sans', sans-serif;letter-spacing:-0.000px;">0</span>
<span class="t" style="left:963.6px;top:199.6px;line-height:16px;font-size:8.62px;color:#ffffff;font-family:'Liberation Sans', sans-serif;letter-spacing:-0.000px;">33</span>
<span class="t" style="left:963.6px;top:239.8px;line-height:16px;font-size:8.62px;color:#ffffff;font-family:'Liberation Sans', sans-serif;letter-spacing:-0.000px;">0</span>
<div class="a" style="left:772px;top:253.4px;width:215.4px;height:14.6px;background:#2a2a2c;"></div>
<svg style="left:776px;top:258.6px" width="5.2" height="5.2" viewBox="0 0 5.2 5.2"><path d="M5.2 0V5.2H0Z" fill="#9a9a9a"/></svg>
<span class="t" style="left:784.6px;top:253.8px;line-height:16px;font-size:8.8px;color:#b8b8b8;font-family:'Liberation Sans', sans-serif;letter-spacing:0.000px;">CPU (% of all processors)</span>
<svg style="left:968px;top:257.8px" width="5" height="8" viewBox="0 0 5 8"><path d="M0.5 0.5L4.4 4L0.5 7.5" fill="none" stroke="#4a4a4e" stroke-width="1.2"/></svg>
<div class="a" style="left:987.4px;top:100px;width:12.2px;height:168px;background:#3e3e42;"></div>
<svg style="left:989.4px;top:112.4px" width="8.4" height="5" viewBox="0 0 8.4 5"><path d="M0.5 4.6L4.2 0.8L7.9 4.6" fill="none" stroke="#999" stroke-width="1.4"/></svg>
<div class="a" style="left:988.6px;top:124.6px;width:10.2px;height:84px;background:#686868;"></div>
<svg style="left:989.4px;top:250px" width="8.4" height="5" viewBox="0 0 8.4 5"><path d="M0.5 0.4L4.2 4.2L7.9 0.4" fill="none" stroke="#999" stroke-width="1.4"/></svg>
<div class="a" style="left:772px;top:268px;width:227.6px;height:3px;background:#2d2d30;"></div>
<div class="a" style="left:772px;top:271px;width:227.6px;height:18.6px;background:#252526;"></div>
<div class="a" style="left:774px;top:273.6px;width:47.8px;height:15.4px;background:#3a3a3e;"></div>
<span class="t" style="left:779.2px;top:273.2px;line-height:16px;font-size:8.88px;color:#f1f1f1;font-family:'Liberation Sans', sans-serif;letter-spacing:0.000px;">Summary</span>
<span class="t" style="left:826.6px;top:273.2px;line-height:16px;font-size:8.4px;color:#f1f1f1;font-family:'Liberation Sans', sans-serif;letter-spacing:-0.138px;">Events</span>
<span class="t" style="left:860.6px;top:273.2px;line-height:16px;font-size:8.94px;color:#f1f1f1;font-family:'Liberation Sans', sans-serif;letter-spacing:0.000px;">Memory Usage</span>
<span class="t" style="left:929.6px;top:273.2px;line-height:16px;font-size:8.4px;color:#f1f1f1;font-family:'Liberation Sans', sans-serif;letter-spacing:-0.094px;">CPU Usage</span>
<div class="a" style="left:772px;top:289.6px;width:227.6px;height:1.8px;background:#2d2d30;"></div>
<div class="a" style="left:772px;top:291.4px;width:215.6px;height:91.6px;background:#252526;"></div>
<div class="a" style="left:987.6px;top:291.4px;width:12px;height:91.6px;background:#3e3e42;"></div>
<div class="a" style="left:772px;top:307.3px;width:215.6px;height:1px;background:#3a3a3e;"></div>
<div class="a" style="left:772px;top:329.4px;width:215.6px;height:1px;background:#3a3a3e;"></div>
<div class="a" style="left:772px;top:346.3px;width:215.6px;height:1px;background:#3a3a3e;"></div>
<span class="t" style="left:778.7px;top:291.8px;line-height:16px;font-size:8.4px;color:#ffffff;font-family:'Liberation Sans', sans-serif;font-weight:bold;letter-spacing:-0.390px;">Events</span>
<svg style="left:782.4px;top:316.2px" width="10.8" height="6" viewBox="0 0 10.8 6"><path d="M0 3L1.6 0.6L3.2 3L1.6 5.4ZM2.5 3L4.1 0.6L5.7 3L4.1 5.4ZM5 3L6.6 0.6L8.2 3L6.6 5.4ZM7.5 3L9.1 0.6L10.7 3L9.1 5.4Z" fill="#d8d8d8"/></svg>
<span class="t" style="left:798.7px;top:311.5px;line-height:16px;font-size:8.65px;color:#f1f1f1;font-family:'Liberation Sans', sans-serif;letter-spacing:0.000px;">Show Events (1 of 1)</span>
<span class="t" style="left:778.7px;top:330.8px;line-height:16px;font-size:8.66px;color:#ffffff;font-family:'Liberation Sans', sans-serif;font-weight:bold;letter-spacing:0.000px;">Memory Usage</span>
<svg style="left:782.4px;top:353.8px" width="11" height="8.6" viewBox="0 0 11 8.6"><rect x="0.5" y="1.5" width="10" height="6.6" fill="none" stroke="#d8d8d8" stroke-width="1"/><rect x="1.6" y="0" width="2.6" height="1.4" fill="#d8d8d8"/><circle cx="5.6" cy="4.8" r="1.9" fill="none" stroke="#d8d8d8" stroke-width="1"/></svg>
<span class="t" style="left:798.7px;top:350.6px;line-height:16px;font-size:8.74px;color:#f1f1f1;font-family:'Liberation Sans', sans-serif;letter-spacing:0.000px;">Take Snapshot</span>
<svg style="left:782.4px;top:374.4px" width="11" height="9" viewBox="0 0 11 9"><rect x="1.4" y="0.5" width="8.2" height="8" fill="none" stroke="#d8d8d8" stroke-width="1"/><rect x="0" y="2.6" width="11" height="4.6" fill="#d8d8d8"/><rect x="2.6" y="4" width="5.8" height="1.2" fill="#252526"/></svg>
<span class="t" style="left:798.7px;top:371.4px;line-height:16px;font-size:8.94px;color:#f1f1f1;font-family:'Liberation Sans', sans-serif;letter-spacing:0.000px;">Enable heap profiling (affects performance)</span>
<div class="a" style="left:772px;top:383.1px;width:228px;height:6px;background:#3f3f46;"></div>
<svg style="left:989.6px;top:303.6px" width="8.4" height="5" viewBox="0 0 8.4 5"><path d="M0.5 4.6L4.2 0.8L7.9 4.6" fill="none" stroke="#999" stroke-width="1.4"/></svg>
<div class="a" style="left:988.8px;top:316px;width:10px;height:27.4px;background:#686868;"></div>
<svg style="left:989.6px;top:364px" width="8.4" height="5" viewBox="0 0 8.4 5"><path d="M0.5 0.4L4.2 4.2L7.9 0.4" fill="none" stroke="#999" stroke-width="1.4"/></svg>
<div class="a" style="left:1019.6px;top:83.3px;width:4.4px;height:67.5px;background:#3f3f46;"></div>
<div class="a" style="left:1019.6px;top:160.6px;width:4.4px;height:54.7px;background:#3f3f46;"></div>
<span class="t" style="left:0px;top:-8.0px;line-height:16px;font-size:8.85px;color:#d0d0d0;font-family:'Liberation Sans', sans-serif;letter-spacing:0.000px;transform-origin:0 0;transform:translate(1019.4px,91.3px) rotate(90deg);">Solution Explorer</span>
<span class="t" style="left:0px;top:-8.0px;line-height:16px;font-size:8.47px;color:#d0d0d0;font-family:'Liberation Sans', sans-serif;letter-spacing:0.000px;transform-origin:0 0;transform:translate(1019.4px,168px) rotate(90deg);">Team Explorer</span>
<div class="a" style="left:4.8px;top:388.8px;width:995.2px;height:120px;background:#2d2d30;border:1px solid #3f3f46;box-sizing:border-box;"></div>
<span class="t" style="left:8.5px;top:389.5px;line-height:16px;font-size:8.53px;color:#d0d0d0;font-family:'Liberation Sans', sans-serif;letter-spacing:0.000px;">Error List</span>
<div class="a" style="left:48px;top:395px;width:912px;height:5px;background-image:radial-gradient(circle at 0.6px 0.6px,#47474c 0.55px,transparent 0.75px),radial-gradient(circle at 1.85px 1.85px,#47474c 0.55px,transparent 0.75px);background-size:2.5px 2.5px;"></div>
<svg style="left:964.4px;top:395.6px" width="6" height="3.4" viewBox="0 0 6 3.4"><path d="M0 0H6L3 3.4Z" fill="#f1f1f1"/></svg>
<svg style="left:976.4px;top:392.6px" width="5" height="8.6" viewBox="0 0 5 8.6"><path d="M1.2 0.5H3.8V4.6H1.2ZM0 4.6H5M2.5 4.6V8.6" fill="none" stroke="#f1f1f1" stroke-width="1"/><rect x="3" y="0.5" width="1" height="4" fill="#f1f1f1"/></svg>
<svg style="left:988px;top:393.4px" width="7" height="7" viewBox="0 0 7 7"><path d="M0.3 0.3L6.7 6.7M6.7 0.3L0.3 6.7" stroke="#f1f1f1" stroke-width="1.2"/></svg>
<div class="a" style="left:10.6px;top:407.2px;width:112px;height:15px;background:#333337;border:1px solid #434346;box-sizing:border-box;"></div>
<span class="t" style="left:13.6px;top:407.5px;line-height:16px;font-size:8.86px;color:#f1f1f1;font-family:'Liberation Sans', sans-serif;letter-spacing:0.000px;">Entire Solution</span>
<svg style="left:115.2px;top:414.40000000000003px" width="4.6" height="2.8" viewBox="0 0 4.6 2.8"><path d="M0 0H4.6L2.3 2.8Z" fill="#929292"/></svg>
<div class="a" style="left:127.5px;top:408px;width:1px;height:14px;background:#46464a;"></div>
<div class="a" style="left:131px;top:406.3px;width:53px;height:16.5px;background:#1f1f22;border:1px solid #3277c8;box-sizing:border-box;"></div>
<svg style="left:133.4px;top:408.7px" width="12" height="12" viewBox="0 0 12 12"><circle cx="6" cy="6" r="5.5" fill="#e0242c" stroke="#f4f4f4" stroke-width="1"/><path d="M3.6 3.6L8.4 8.4M8.4 3.6L3.6 8.4" stroke="#fff" stroke-width="1.8"/></svg>
<span class="t" style="left:148.8px;top:406.8px;line-height:16px;font-size:8.4px;color:#f1f1f1;font-family:'Liberation Sans', sans-serif;letter-spacing:-0.068px;">0 Errors</span>
<div class="a" style="left:186.7px;top:408px;width:1px;height:14px;background:#46464a;"></div>
<div class="a" style="left:189.4px;top:406.3px;width:67.8px;height:16.5px;background:#1f1f22;border:1px solid #3277c8;box-sizing:border-box;"></div>
<svg style="left:192px;top:408.6px" width="12" height="12.2" viewBox="0 0 12 12.2"><path d="M6 0.6L11.6 11.6H0.4Z" fill="#ffcc00" stroke="#f4e9b0" stroke-width="0.8" stroke-linejoin="round"/><rect x="5.3" y="4" width="1.5" height="4" fill="#222"/><rect x="5.3" y="8.8" width="1.5" height="1.5" fill="#222"/></svg>
<span class="t" style="left:207.2px;top:406.8px;line-height:16px;font-size:8.64px;color:#f1f1f1;font-family:'Liberation Sans', sans-serif;letter-spacing:0.000px;">0 Warnings</span>
<div class="a" style="left:259.7px;top:408px;width:1px;height:14px;background:#46464a;"></div>
<svg style="left:265.2px;top:408.7px" width="12" height="12" viewBox="0 0 12 12"><circle cx="6" cy="6" r="5.5" fill="#1ba1e2" stroke="#f4f4f4" stroke-width="1"/><rect x="5.3" y="5" width="1.5" height="4.6" fill="#fff"/><rect x="5.3" y="2.6" width="1.5" height="1.5" fill="#fff"/></svg>
<span class="t" style="left:280.4px;top:406.8px;line-height:16px;font-size:8.4px;color:#f1f1f1;font-family:'Liberation Sans', sans-serif;letter-spacing:-0.010px;">0 Messages</span>
<div class="a" style="left:333.9px;top:408px;width:1px;height:14px;background:#46464a;"></div>
<div class="a" style="left:337.2px;top:406.3px;width:16.6px;height:16.5px;background:#1f1f22;border:1px solid #3277c8;box-sizing:border-box;"></div>
<svg style="left:340.4px;top:409.2px" width="11" height="10.6" viewBox="0 0 11 10.6"><path d="M0.4 0.4L4.8 4.8M4.8 0.4L0.4 4.8" stroke="#f05f4c" stroke-width="1.5"/><path d="M4.4 4.6H10.6L8.2 7.4V10.4H6.8V7.4Z" fill="#d0d0d0"/></svg>
<div class="a" style="left:357.0px;top:408px;width:1px;height:14px;background:#46464a;"></div>
<div class="a" style="left:362.2px;top:407.2px;width:112px;height:15px;background:#333337;border:1px solid #434346;box-sizing:border-box;"></div>
<span class="t" style="left:365.6px;top:407.5px;line-height:16px;font-size:8.74px;color:#f1f1f1;font-family:'Liberation Sans', sans-serif;letter-spacing:0.000px;">Build + IntelliSense</span>
<svg style="left:467.2px;top:414.40000000000003px" width="4.6" height="2.8" viewBox="0 0 4.6 2.8"><path d="M0 0H4.6L2.3 2.8Z" fill="#929292"/></svg>
<div class="a" style="left:850.3px;top:406.5px;width:148.8px;height:15.4px;background:#333337;border:1px solid #434346;box-sizing:border-box;"></div>
<span class="t" style="left:854px;top:406.6px;line-height:16px;font-size:8.4px;color:#999999;font-family:'Liberation Sans', sans-serif;letter-spacing:-0.014px;">Search Error List</span>
<svg style="left:978.6px;top:409.2px" width="10" height="10" viewBox="0 0 10 10"><circle cx="6.3" cy="3.7" r="2.7" fill="none" stroke="#f1f1f1" stroke-width="1.5"/><path d="M4.3 5.7L0.8 9.2" stroke="#f1f1f1" stroke-width="1.8"/></svg>
<svg style="left:993.0px;top:413.75px" width="4" height="2.5" viewBox="0 0 4 2.5"><path d="M0 0H4L2.0 2.5Z" fill="#d0d0d0"/></svg>
<div class="a" style="left:5.8px;top:425px;width:993.2px;height:83.6px;background:#252526;"></div>
<div class="a" style="left:5.8px;top:440px;width:993.2px;height:1px;background:#3f3f46;"></div>
<div class="a" style="left:25.6px;top:425px;width:1px;height:15px;background:#3f3f46;"></div>
<div class="a" style="left:45.6px;top:425px;width:1px;height:15px;background:#3f3f46;"></div>
<div class="a" style="left:82.5px;top:425px;width:1px;height:15px;background:#3f3f46;"></div>
<div class="a" style="left:571.5px;top:425px;width:1px;height:15px;background:#3f3f46;"></div>
<div class="a" style="left:646px;top:425px;width:1px;height:15px;background:#3f3f46;"></div>
<div class="a" style="left:810px;top:425px;width:1px;height:15px;background:#3f3f46;"></div>
<div class="a" style="left:836px;top:425px;width:1px;height:15px;background:#3f3f46;"></div>
<div class="a" style="left:930.4px;top:425px;width:1px;height:15px;background:#3f3f46;"></div>
<svg style="left:37.5px;top:427.2px" width="4.6" height="4.8" viewBox="0 0 4.6 4.8"><path d="M0 0.5H4.2V4.6M1.4 2H2.8V3.4" fill="none" stroke="#8a8a8a" stroke-width="0.9"/></svg>
<span class="t" style="left:48.6px;top:425.4px;line-height:16px;font-size:8.53px;color:#f1f1f1;font-family:'Liberation Sans', sans-serif;letter-spacing:-0.000px;">Code</span>
<span class="t" style="left:85.7px;top:424.6px;line-height:16px;font-size:8.87px;color:#f1f1f1;font-family:'Liberation Sans', sans-serif;letter-spacing:0.000px;">Description</span>
<svg style="left:135px;top:430px" width="10" height="5" viewBox="0 0 10 5"><path d="M0.8 4.5L5 0.7L9.2 4.5Z" fill="none" stroke="#f1f1f1" stroke-width="1"/></svg>
<span class="t" style="left:574.6px;top:425.0px;line-height:16px;font-size:8.67px;color:#f1f1f1;font-family:'Liberation Sans', sans-serif;letter-spacing:0.000px;">Project</span>
<span class="t" style="left:649.6px;top:425.0px;line-height:16px;font-size:8.4px;color:#f1f1f1;font-family:'Liberation Sans', sans-serif;letter-spacing:-0.181px;">File</span>
<span class="t" style="left:813.4px;top:425.0px;line-height:16px;font-size:8.67px;color:#f1f1f1;font-family:'Liberation Sans', sans-serif;letter-spacing:0.000px;">Line</span>
<span class="t" style="left:839.6px;top:425.0px;line-height:16px;font-size:8.49px;color:#f1f1f1;font-family:'Liberation Sans', sans-serif;letter-spacing:0.000px;">Suppression State</span>
<span class="t" style="left:9.4px;top:508.79999999999995px;line-height:16px;font-size:8.4px;color:#d0d0d0;font-family:'Liberation Sans', sans-serif;letter-spacing:-0.003px;">Call Stack</span>
<span class="t" style="left:56.8px;top:508.79999999999995px;line-height:16px;font-size:8.71px;color:#d0d0d0;font-family:'Liberation Sans', sans-serif;letter-spacing:0.000px;">Breakpoints</span>
<span class="t" style="left:111.8px;top:508.79999999999995px;line-height:16px;font-size:8.74px;color:#d0d0d0;font-family:'Liberation Sans', sans-serif;letter-spacing:0.000px;">Exception Settings</span>
<span class="t" style="left:193.6px;top:508.79999999999995px;line-height:16px;font-size:9.19px;color:#d0d0d0;font-family:'Liberation Sans', sans-serif;letter-spacing:0.000px;">Command Window</span>
<span class="t" style="left:280.6px;top:508.79999999999995px;line-height:16px;font-size:9.12px;color:#d0d0d0;font-family:'Liberation Sans', sans-serif;letter-spacing:0.000px;">Immediate Window</span>
<span class="t" style="left:367.6px;top:508.79999999999995px;line-height:16px;font-size:9.46px;color:#d0d0d0;font-family:'Liberation Sans', sans-serif;letter-spacing:0.000px;">Output</span>
<div class="a" style="left:400.4px;top:507.8px;width:43.4px;height:16px;background:#252526;border:1px solid #38383c;box-sizing:border-box;"></div>
<div class="a" style="left:402px;top:507.8px;width:40.4px;height:1.2px;background:#252526;"></div>
<span class="t" style="left:404.6px;top:508.20000000000005px;line-height:16px;font-size:8.48px;color:#0e97dd;font-family:'Liberation Sans', sans-serif;letter-spacing:0.000px;">Error List</span>
<span class="t" style="left:448.6px;top:508.79999999999995px;line-height:16px;font-size:8.91px;color:#d0d0d0;font-family:'Liberation Sans', sans-serif;letter-spacing:0.000px;">Autos</span>
<span class="t" style="left:480.8px;top:508.79999999999995px;line-height:16px;font-size:8.44px;color:#d0d0d0;font-family:'Liberation Sans', sans-serif;letter-spacing:0.000px;">Locals</span>
<span class="t" style="left:514.2px;top:508.79999999999995px;line-height:16px;font-size:8.65px;color:#d0d0d0;font-family:'Liberation Sans', sans-serif;letter-spacing:0.000px;">Watch 1</span>
<div class="a" style="left:0px;top:528.5px;width:1024px;height:17.5px;background:#ca5100;"></div>
<svg style="left:3px;top:534px" width="12.2" height="8" viewBox="0 0 12.2 8"><path d="M2.4 0.5H11.6L9.8 7.5H0.6Z" fill="none" stroke="#ffffff" stroke-width="1"/></svg>
<span class="t" style="left:21.3px;top:530.0px;line-height:16px;font-size:8.4px;color:#ffffff;font-family:'Liberation Sans', sans-serif;letter-spacing:-0.220px;">Ready</span>
<span class="t" style="left:454.6px;top:530.0px;line-height:16px;font-size:8.52px;color:#ffffff;font-family:'Liberation Sans', sans-serif;letter-spacing:0.000px;">Ln 9</span>
<span class="t" style="left:523.6px;top:530.0px;line-height:16px;font-size:8.4px;color:#ffffff;font-family:'Liberation Sans', sans-serif;letter-spacing:-0.004px;">Col 1</span>
<span class="t" style="left:592.6px;top:530.0px;line-height:16px;font-size:8.4px;color:#ffffff;font-family:'Liberation Sans', sans-serif;letter-spacing:-0.318px;">Ch 1</span>
<span class="t" style="left:694px;top:530.0px;line-height:16px;font-size:8.4px;color:#ffffff;font-family:'Liberation Sans', sans-serif;letter-spacing:-0.404px;">INS</span>
<svg style="left:900px;top:533.6px" width="6.6" height="8.4" viewBox="0 0 6.6 8.4"><path d="M3.3 8.4V0.8M0.4 3.6L3.3 0.6L6.2 3.6" fill="none" stroke="#ffffff" stroke-width="1.2"/></svg>
<span class="t" style="left:914.2px;top:530.0px;line-height:16px;font-size:8.94px;color:#ffffff;font-family:'Liberation Sans', sans-serif;letter-spacing:0.000px;">Add to Source Control</span>
<svg style="left:1007.4px;top:536.4px" width="5.6" height="3.2" viewBox="0 0 5.6 3.2"><path d="M0 3.2H5.6L2.8 0Z" fill="#ffffff"/></svg>
</body></html>
